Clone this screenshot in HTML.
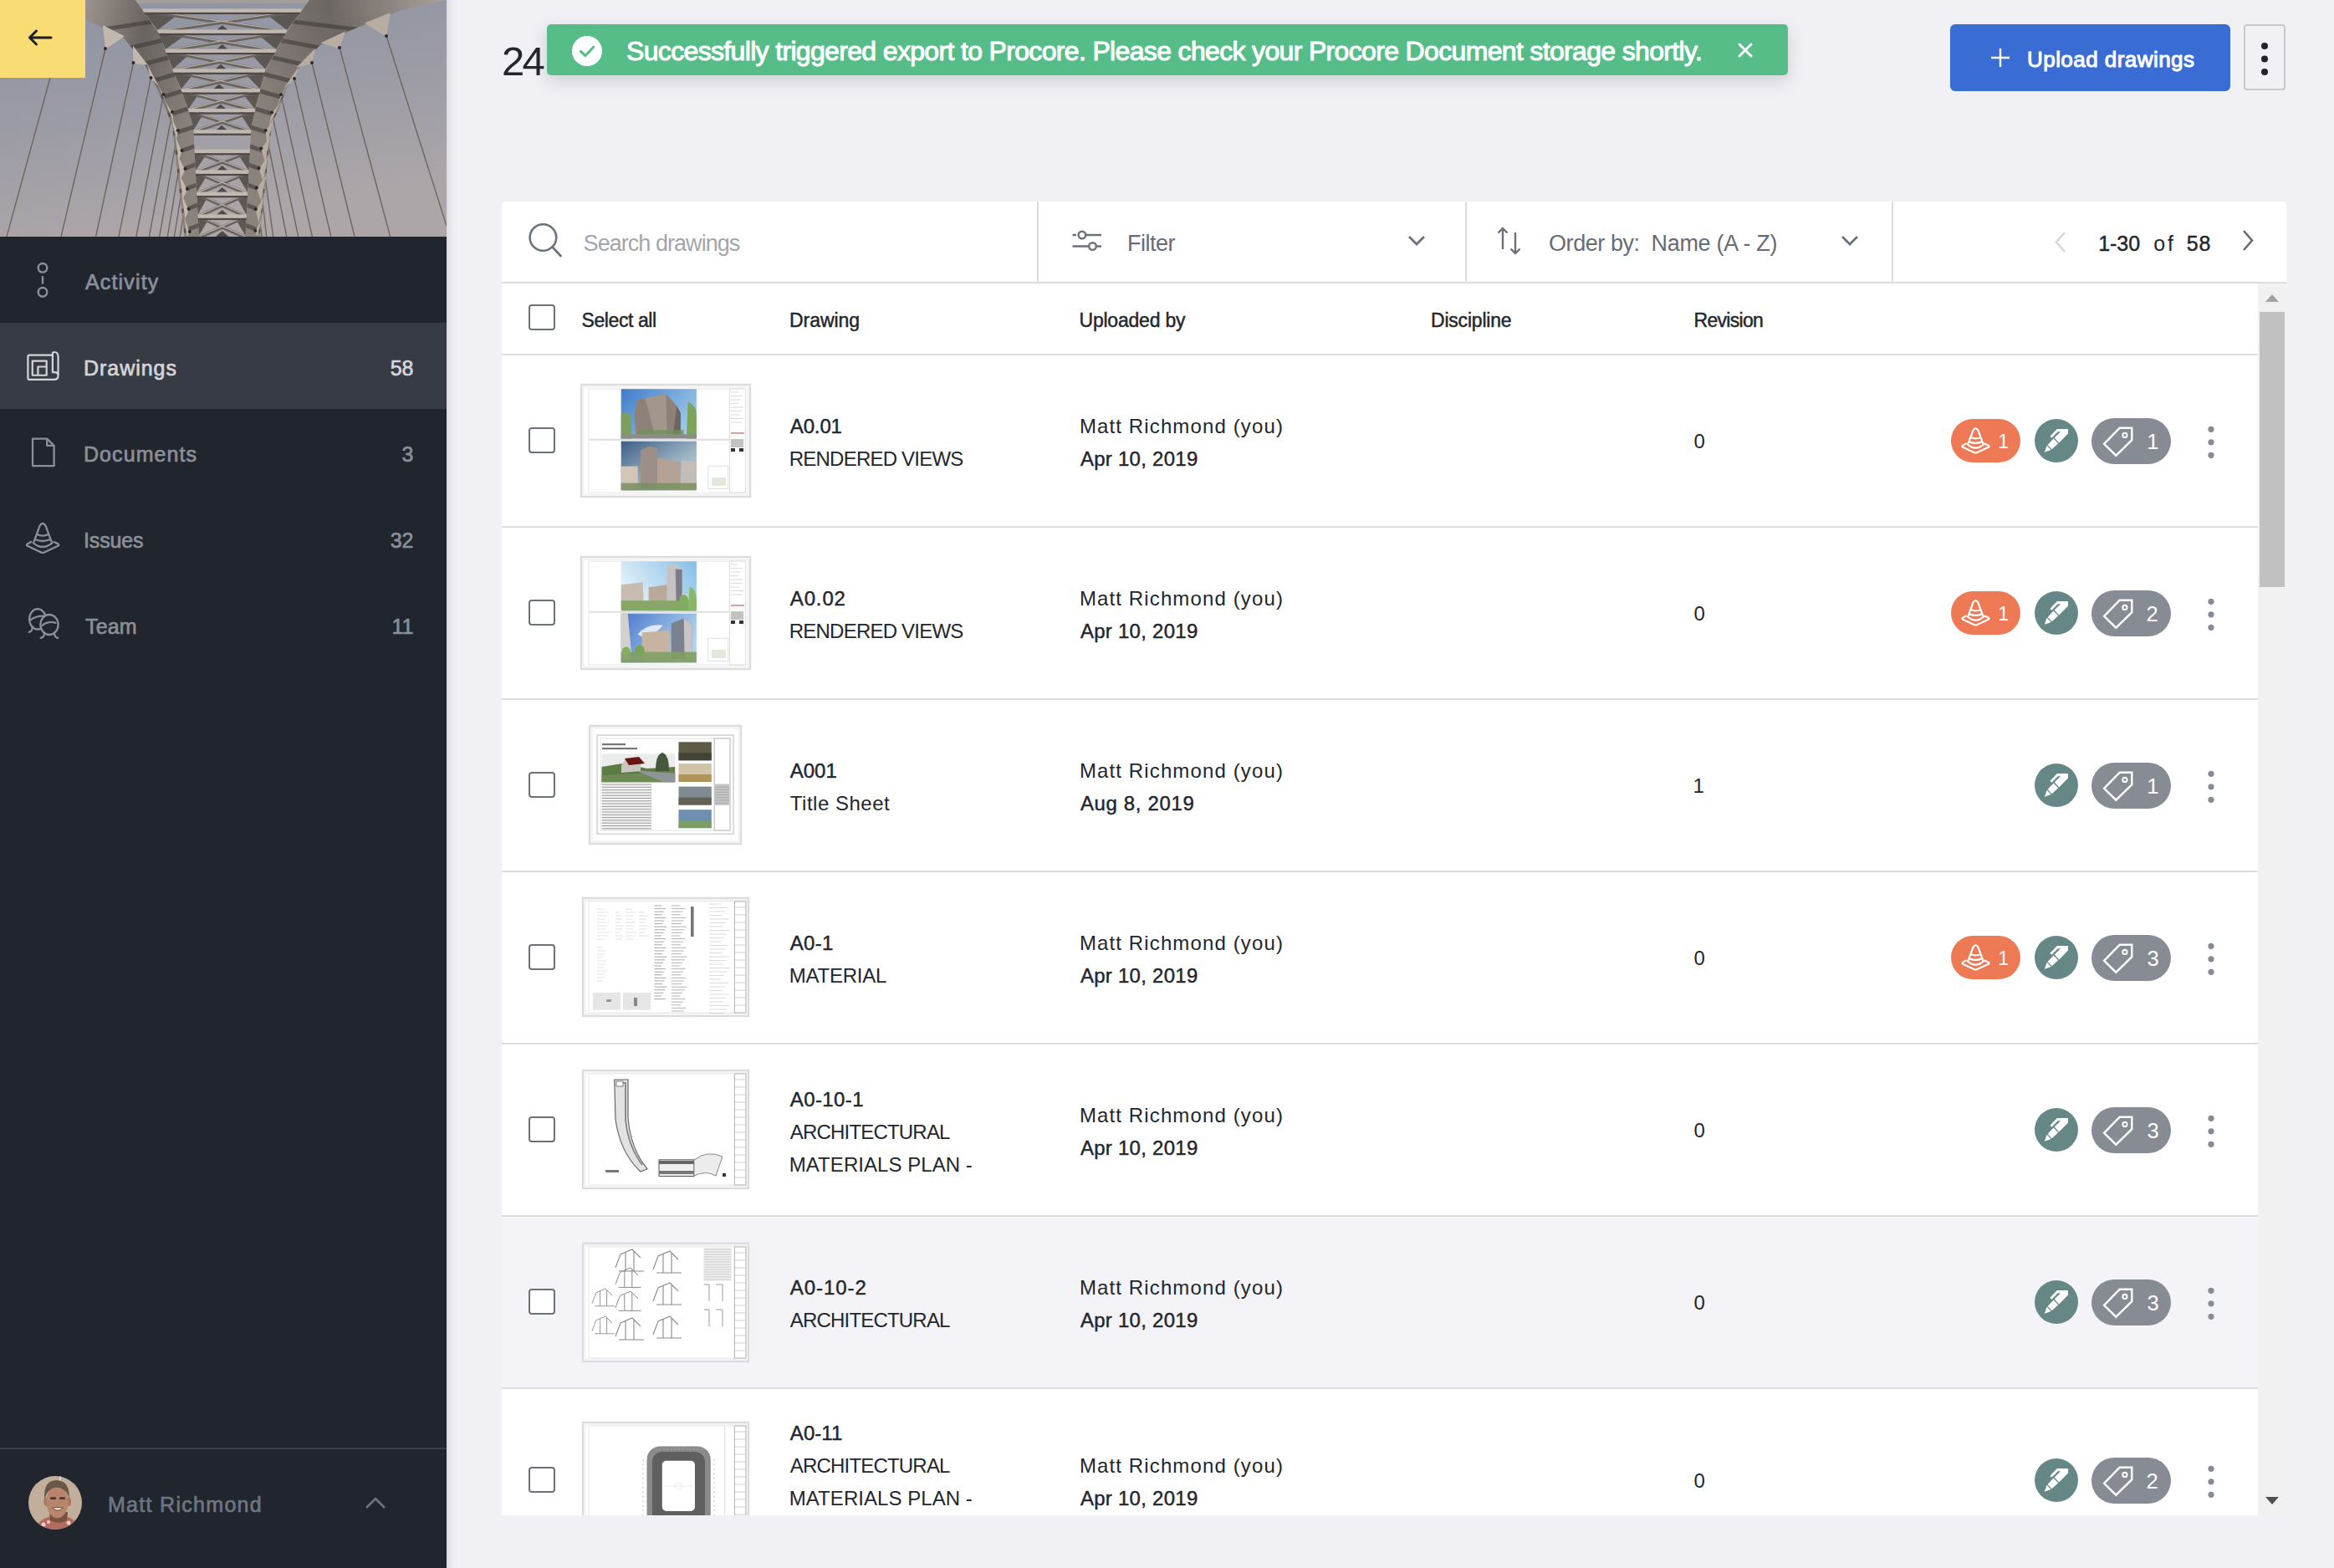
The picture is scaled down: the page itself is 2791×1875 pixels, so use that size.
<!DOCTYPE html>
<html><head><meta charset="utf-8"><style>
html,body{margin:0;padding:0;}
body{width:2791px;height:1875px;overflow:hidden;position:relative;background:#f0f0f5;font-family:"Liberation Sans", sans-serif;}
.t{position:absolute;white-space:nowrap;font-family:"Liberation Sans", sans-serif;}
.a{position:absolute;}
svg{position:absolute;display:block;overflow:visible}
</style></head><body>
<div class="a" style="left:0px;top:0px;width:534px;height:1875px;background:#21252e"></div>
<svg style="left:0px;top:0px;overflow:hidden" width="534" height="283" viewBox="0 0 534 283"><defs><linearGradient id="sky" x1="0" y1="0" x2="0.3" y2="1"><stop offset="0" stop-color="#8d93a3"/><stop offset="0.5" stop-color="#9b9ba5"/><stop offset="1" stop-color="#ada6a9"/></linearGradient><linearGradient id="tubeL" x1="0" y1="0" x2="1" y2="0.3"><stop offset="0" stop-color="#a39a93"/><stop offset="0.55" stop-color="#6a6461"/><stop offset="1" stop-color="#8a827c"/></linearGradient><linearGradient id="tubeR" x1="1" y1="0" x2="0" y2="0.3"><stop offset="0" stop-color="#aaa199"/><stop offset="0.55" stop-color="#6d6764"/><stop offset="1" stop-color="#8a827c"/></linearGradient></defs><rect width="534" height="283" fill="url(#sky)"/><line x1="60" y1="93" x2="8" y2="283" stroke="#6e655f" stroke-width="1.4"/><line x1="126" y1="58" x2="73" y2="283" stroke="#6e655f" stroke-width="1.4"/><line x1="159.5" y1="75" x2="114.6" y2="283" stroke="#6e655f" stroke-width="1.4"/><line x1="180.5" y1="93" x2="142" y2="283" stroke="#6e655f" stroke-width="1.4"/><line x1="195.5" y1="113" x2="162.9" y2="283" stroke="#6e655f" stroke-width="1.4"/><line x1="206" y1="134" x2="178.4" y2="283" stroke="#6e655f" stroke-width="1.4"/><line x1="212.7" y1="156" x2="190.7" y2="283" stroke="#6e655f" stroke-width="1.4"/><line x1="217.5" y1="180" x2="200.3" y2="283" stroke="#6e655f" stroke-width="1.4"/><line x1="221.5" y1="202" x2="208.4" y2="283" stroke="#6e655f" stroke-width="1.4"/><line x1="223.9" y1="226" x2="215.3" y2="283" stroke="#6e655f" stroke-width="1.4"/><line x1="462" y1="43" x2="534" y2="270" stroke="#6e655f" stroke-width="1.4"/><line x1="406" y1="57" x2="466.7" y2="283" stroke="#6e655f" stroke-width="1.4"/><line x1="373" y1="75" x2="424" y2="283" stroke="#6e655f" stroke-width="1.4"/><line x1="352" y1="94" x2="395.8" y2="283" stroke="#6e655f" stroke-width="1.4"/><line x1="336" y1="113" x2="373.3" y2="283" stroke="#6e655f" stroke-width="1.4"/><line x1="325" y1="134.5" x2="356.7" y2="283" stroke="#6e655f" stroke-width="1.4"/><line x1="317.6" y1="156" x2="342.8" y2="283" stroke="#6e655f" stroke-width="1.4"/><line x1="312.3" y1="177.5" x2="326.7" y2="283" stroke="#6e655f" stroke-width="1.4"/><line x1="309.6" y1="201" x2="318.7" y2="283" stroke="#6e655f" stroke-width="1.4"/><line x1="306.9" y1="224.6" x2="313" y2="283" stroke="#6e655f" stroke-width="1.4"/><path d="M170.8,12.9 L218.3,12.9 L188.5,35.9 Z M360.8,12.9 L313.3,12.9 L343.1,35.9 Z" fill="#5d5754"/><path d="M170.8,12.9 L343.1,37.9 M360.8,12.9 L188.5,37.9" stroke="#6a6460" stroke-width="4.2" fill="none"/><path d="M170.8,11.700000000000001 L343.1,36.699999999999996 M360.8,11.700000000000001 L188.5,36.699999999999996" stroke="#b4aca5" stroke-width="1.3" fill="none"/><path d="M256.8,37.9 L274.8,37.9 L265.8,29.9 Z" fill="#4f4a48"/><path d="M188.5,37.9 L227.2,37.9 L197.8,59 Z M343.1,37.9 L304.4,37.9 L330.1,59 Z" fill="#5d5754"/><path d="M188.5,37.9 L330.1,61 M343.1,37.9 L197.8,61" stroke="#6a6460" stroke-width="4.2" fill="none"/><path d="M188.5,36.699999999999996 L330.1,59.8 M343.1,36.699999999999996 L197.8,59.8" stroke="#b4aca5" stroke-width="1.3" fill="none"/><path d="M256.8,61 L274.8,61 L265.8,53 Z" fill="#4f4a48"/><path d="M197.8,61 L230.9,61 L206.6,82.8 Z M330.1,61 L297.0,61 L317.1,82.8 Z" fill="#5d5754"/><path d="M197.8,61 L317.1,84.8 M330.1,61 L206.6,84.8" stroke="#6a6460" stroke-width="4.2" fill="none"/><path d="M197.8,59.8 L317.1,83.6 M330.1,59.8 L206.6,83.6" stroke="#b4aca5" stroke-width="1.3" fill="none"/><path d="M255.0,84.8 L273.0,84.8 L264.0,76.8 Z" fill="#4f4a48"/><path d="M206.6,84.8 L234.2,84.8 L216.8,106.6 Z M317.1,84.8 L289.5,84.8 L311.0,106.6 Z" fill="#5d5754"/><path d="M206.6,84.8 L311.0,108.6 M317.1,84.8 L216.8,108.6" stroke="#6a6460" stroke-width="4.2" fill="none"/><path d="M206.6,83.6 L311.0,107.39999999999999 M317.1,83.6 L216.8,107.39999999999999" stroke="#b4aca5" stroke-width="1.3" fill="none"/><path d="M252.9,108.6 L270.9,108.6 L261.9,100.6 Z" fill="#4f4a48"/><path d="M216.8,108.6 L240.3,108.6 L225.2,130.4 Z M311.0,108.6 L287.4,108.6 L305.0,130.4 Z" fill="#5d5754"/><path d="M216.8,108.6 L305.0,132.4 M311.0,108.6 L225.2,132.4" stroke="#6a6460" stroke-width="4.2" fill="none"/><path d="M216.8,107.39999999999999 L305.0,131.20000000000002 M311.0,107.39999999999999 L225.2,131.20000000000002" stroke="#b4aca5" stroke-width="1.3" fill="none"/><path d="M254.9,132.4 L272.9,132.4 L263.9,124.4 Z" fill="#4f4a48"/><path d="M225.2,132.4 L245.2,132.4 L231.4,155.7 Z M305.0,132.4 L285.0,132.4 L300.1,155.7 Z" fill="#5d5754"/><path d="M225.2,132.4 L300.1,157.7 M305.0,132.4 L231.4,157.7" stroke="#6a6460" stroke-width="4.2" fill="none"/><path d="M225.2,131.20000000000002 L300.1,156.5 M305.0,131.20000000000002 L231.4,156.5" stroke="#b4aca5" stroke-width="1.3" fill="none"/><path d="M256.1,157.7 L274.1,157.7 L265.1,149.7 Z" fill="#4f4a48"/><path d="M232.6,181.2 L249.2,181.2 L233.8,203.9 Z M298.9,181.2 L282.3,181.2 L297.6,203.9 Z" fill="#5d5754"/><path d="M232.6,181.2 L297.6,205.9 M298.9,181.2 L233.8,205.9" stroke="#6a6460" stroke-width="4.2" fill="none"/><path d="M232.6,180.0 L297.6,204.70000000000002 M298.9,180.0 L233.8,204.70000000000002" stroke="#b4aca5" stroke-width="1.3" fill="none"/><path d="M256.7,205.9 L274.7,205.9 L265.7,197.9 Z" fill="#4f4a48"/><path d="M233.8,205.9 L249.8,205.9 L235.2,230.1 Z M297.6,205.9 L281.6,205.9 L296.2,230.1 Z" fill="#5d5754"/><path d="M233.8,205.9 L296.2,232.1 M297.6,205.9 L235.2,232.1" stroke="#6a6460" stroke-width="4.2" fill="none"/><path d="M233.8,204.70000000000002 L296.2,230.9 M297.6,204.70000000000002 L235.2,230.9" stroke="#b4aca5" stroke-width="1.3" fill="none"/><path d="M256.7,232.1 L274.7,232.1 L265.7,224.1 Z" fill="#4f4a48"/><path d="M235.2,232.1 L250.4,232.1 L236.5,256.9 Z M296.2,232.1 L280.9,232.1 L294.8,256.9 Z" fill="#5d5754"/><path d="M235.2,232.1 L294.8,258.9 M296.2,232.1 L236.5,258.9" stroke="#6a6460" stroke-width="4.2" fill="none"/><path d="M235.2,230.9 L294.8,257.7 M296.2,230.9 L236.5,257.7" stroke="#b4aca5" stroke-width="1.3" fill="none"/><path d="M256.7,258.9 L274.7,258.9 L265.7,250.89999999999998 Z" fill="#4f4a48"/><path d="M236.5,258.9 L251.1,258.9 L237.8,282 Z M294.8,258.9 L280.2,258.9 L293.5,282 Z" fill="#5d5754"/><path d="M236.5,258.9 L293.5,284 M294.8,258.9 L237.8,284" stroke="#6a6460" stroke-width="4.2" fill="none"/><path d="M236.5,257.7 L293.5,282.8 M294.8,257.7 L237.8,282.8" stroke="#b4aca5" stroke-width="1.3" fill="none"/><path d="M256.7,284 L274.7,284 L265.7,276 Z" fill="#4f4a48"/><rect x="170.8" y="10.4" width="190.0" height="4.5" fill="#c0b8b1"/><rect x="170.8" y="14.9" width="190.0" height="2.2" fill="#4e4846"/><rect x="188.5" y="35.4" width="154.6" height="4.5" fill="#c0b8b1"/><rect x="188.5" y="39.9" width="154.6" height="2.2" fill="#4e4846"/><rect x="197.8" y="58.5" width="132.3" height="4.5" fill="#c0b8b1"/><rect x="197.8" y="63.0" width="132.3" height="2.2" fill="#4e4846"/><rect x="206.6" y="82.3" width="110.5" height="4.5" fill="#c0b8b1"/><rect x="206.6" y="86.8" width="110.5" height="2.2" fill="#4e4846"/><rect x="216.8" y="106.1" width="94.2" height="4.5" fill="#c0b8b1"/><rect x="216.8" y="110.6" width="94.2" height="2.2" fill="#4e4846"/><rect x="225.2" y="129.9" width="79.8" height="4.5" fill="#c0b8b1"/><rect x="225.2" y="134.4" width="79.8" height="2.2" fill="#4e4846"/><rect x="231.4" y="155.2" width="68.7" height="4.5" fill="#c0b8b1"/><rect x="231.4" y="159.7" width="68.7" height="2.2" fill="#4e4846"/><rect x="232.6" y="178.7" width="66.3" height="4.5" fill="#c0b8b1"/><rect x="232.6" y="183.2" width="66.3" height="2.2" fill="#4e4846"/><rect x="233.8" y="203.4" width="63.7" height="4.5" fill="#c0b8b1"/><rect x="233.8" y="207.9" width="63.7" height="2.2" fill="#4e4846"/><rect x="235.2" y="229.6" width="61.0" height="4.5" fill="#c0b8b1"/><rect x="235.2" y="234.1" width="61.0" height="2.2" fill="#4e4846"/><rect x="236.5" y="256.4" width="58.3" height="4.5" fill="#c0b8b1"/><rect x="236.5" y="260.9" width="58.3" height="2.2" fill="#4e4846"/><path d="M150,0 L380,0 L372,4 L158,4 Z" fill="#a59d97"/><path d="M90,0 L161.7,0 L190,40 L206.7,85 L219.5,115 L231,150 L237.8,284 L220.7,284 L206,150 L190,110 L172,75 L147.6,45 L100,22 L90,20 Z" fill="url(#tubeL)"/><path d="M370,0 L534,0 L480,12 L420,36 L382.8,54 L361,75.8 L344,102.8 L334,128.5 L324.6,150 L310.7,284 L293.5,284 L300.5,150 L317,85 L341.6,40 Z" fill="url(#tubeR)"/><defs><clipPath id="cL"><path d="M90,0 L161.7,0 L190,40 L206.7,85 L219.5,115 L231,150 L237.8,284 L220.7,284 L206,150 L190,110 L172,75 L147.6,45 L100,22 L90,20 Z"/></clipPath><clipPath id="cR"><path d="M370,0 L534,0 L480,12 L420,36 L382.8,54 L361,75.8 L344,102.8 L334,128.5 L324.6,150 L310.7,284 L293.5,284 L300.5,150 L317,85 L341.6,40 Z"/></clipPath></defs><g clip-path="url(#cL)"><line x1="110.6" y1="37" x2="188.9" y2="25" stroke="#3f3b3a" stroke-width="5" opacity="0.6"/><line x1="147.3" y1="59" x2="200.5" y2="47" stroke="#3f3b3a" stroke-width="5" opacity="0.6"/><line x1="163.6" y1="79" x2="207.9" y2="67" stroke="#3f3b3a" stroke-width="5" opacity="0.6"/><line x1="174.7" y1="99" x2="215.7" y2="87" stroke="#3f3b3a" stroke-width="5" opacity="0.6"/><line x1="184.8" y1="119" x2="224.2" y2="107" stroke="#3f3b3a" stroke-width="5" opacity="0.6"/><line x1="193.2" y1="140" x2="231.4" y2="128" stroke="#3f3b3a" stroke-width="5" opacity="0.6"/><line x1="200.5" y1="162" x2="237.3" y2="150" stroke="#3f3b3a" stroke-width="5" opacity="0.6"/><line x1="203.1" y1="185" x2="238.4" y2="173" stroke="#3f3b3a" stroke-width="5" opacity="0.6"/><line x1="205.5" y1="207" x2="239.5" y2="195" stroke="#3f3b3a" stroke-width="5" opacity="0.6"/><line x1="208.1" y1="231" x2="240.8" y2="219" stroke="#3f3b3a" stroke-width="5" opacity="0.6"/><line x1="210.8" y1="255" x2="242.0" y2="243" stroke="#3f3b3a" stroke-width="5" opacity="0.6"/><line x1="213.4" y1="279" x2="243.2" y2="267" stroke="#3f3b3a" stroke-width="5" opacity="0.6"/></g><g clip-path="url(#cR)"><line x1="441.0" y1="37" x2="342.7" y2="25" stroke="#3f3b3a" stroke-width="5" opacity="0.6"/><line x1="392.9" y1="59" x2="329.0" y2="47" stroke="#3f3b3a" stroke-width="5" opacity="0.6"/><line x1="370.8" y1="79" x2="318.1" y2="67" stroke="#3f3b3a" stroke-width="5" opacity="0.6"/><line x1="356.8" y1="99" x2="309.2" y2="87" stroke="#3f3b3a" stroke-width="5" opacity="0.6"/><line x1="346.4" y1="119" x2="304.1" y2="107" stroke="#3f3b3a" stroke-width="5" opacity="0.6"/><line x1="338.0" y1="140" x2="298.8" y2="128" stroke="#3f3b3a" stroke-width="5" opacity="0.6"/><line x1="330.1" y1="162" x2="294.2" y2="150" stroke="#3f3b3a" stroke-width="5" opacity="0.6"/><line x1="327.7" y1="185" x2="293.0" y2="173" stroke="#3f3b3a" stroke-width="5" opacity="0.6"/><line x1="325.4" y1="207" x2="291.9" y2="195" stroke="#3f3b3a" stroke-width="5" opacity="0.6"/><line x1="322.9" y1="231" x2="290.6" y2="219" stroke="#3f3b3a" stroke-width="5" opacity="0.6"/><line x1="320.4" y1="255" x2="289.4" y2="243" stroke="#3f3b3a" stroke-width="5" opacity="0.6"/><line x1="317.9" y1="279" x2="288.1" y2="267" stroke="#3f3b3a" stroke-width="5" opacity="0.6"/></g><path d="M122.8,30.0 L149.0,43.2 L126,59 Z" fill="#c3b8ad"/><circle cx="126" cy="58" r="2" fill="#2a2a2e"/><path d="M158.9,54.5 L176.9,77.7 L159.5,76 Z" fill="#c3b8ad"/><circle cx="159.5" cy="75" r="2" fill="#2a2a2e"/><path d="M175.8,76.5 L189.6,102.4 L180.5,94 Z" fill="#c3b8ad"/><circle cx="180.5" cy="93" r="2" fill="#2a2a2e"/><path d="M186.9,98.1 L199.2,124.6 L195.5,114 Z" fill="#c3b8ad"/><circle cx="195.5" cy="113" r="2" fill="#2a2a2e"/><path d="M196.5,119.4 L207.9,146.3 L206,135 Z" fill="#c3b8ad"/><circle cx="206" cy="134" r="2" fill="#2a2a2e"/><path d="M204.5,139.4 L211.0,167.6 L212.7,157 Z" fill="#c3b8ad"/><circle cx="212.7" cy="156" r="2" fill="#2a2a2e"/><path d="M209.6,163.0 L213.7,191.8 L217.5,181 Z" fill="#c3b8ad"/><circle cx="217.5" cy="180" r="2" fill="#2a2a2e"/><path d="M212.1,185.2 L216.1,214.0 L221.5,203 Z" fill="#c3b8ad"/><circle cx="221.5" cy="202" r="2" fill="#2a2a2e"/><path d="M214.7,209.1 L218.8,238.0 L223.9,227 Z" fill="#c3b8ad"/><circle cx="223.9" cy="226" r="2" fill="#2a2a2e"/><path d="M217.3,233.0 L221.4,261.9 L225.6,251 Z" fill="#c3b8ad"/><circle cx="225.6" cy="250" r="2" fill="#2a2a2e"/><path d="M220.3,259.8 L223.7,283.0 L226.7,278 Z" fill="#c3b8ad"/><circle cx="226.7" cy="277" r="2" fill="#2a2a2e"/><path d="M466.8,15.3 L435.9,27.4 L462,44 Z" fill="#b8ada3"/><circle cx="462" cy="43" r="2" fill="#2a2a2e"/><path d="M413.0,37.4 L383.0,51.4 L406,58 Z" fill="#b8ada3"/><circle cx="406" cy="57" r="2" fill="#2a2a2e"/><path d="M377.3,57.5 L354.3,80.7 L373,76 Z" fill="#b8ada3"/><circle cx="373" cy="75" r="2" fill="#2a2a2e"/><path d="M357.7,79.0 L339.4,105.8 L352,95 Z" fill="#b8ada3"/><circle cx="352" cy="94" r="2" fill="#2a2a2e"/><path d="M344.8,99.5 L330.7,128.3 L336,114 Z" fill="#b8ada3"/><circle cx="336" cy="113" r="2" fill="#2a2a2e"/><path d="M335.8,121.9 L321.4,150.6 L325,135.5 Z" fill="#b8ada3"/><circle cx="325" cy="134.5" r="2" fill="#2a2a2e"/><path d="M327.5,141.3 L319.3,171.6 L317.6,157 Z" fill="#b8ada3"/><circle cx="317.6" cy="156" r="2" fill="#2a2a2e"/><path d="M323.1,162.5 L317.0,193.4 L312.3,178.5 Z" fill="#b8ada3"/><circle cx="312.3" cy="177.5" r="2" fill="#2a2a2e"/><path d="M320.7,186.1 L314.6,216.9 L309.6,202 Z" fill="#b8ada3"/><circle cx="309.6" cy="201" r="2" fill="#2a2a2e"/><path d="M318.2,209.7 L312.1,240.5 L306.9,225.6 Z" fill="#b8ada3"/><circle cx="306.9" cy="224.6" r="2" fill="#2a2a2e"/><path d="M315.6,235.2 L309.5,266.1 L305.8,251.3 Z" fill="#b8ada3"/><circle cx="305.8" cy="250.3" r="2" fill="#2a2a2e"/><path d="M312.9,260.7 L307.7,283.0 L305.3,277 Z" fill="#b8ada3"/><circle cx="305.3" cy="276" r="2" fill="#2a2a2e"/></svg>
<div class="a" style="left:0px;top:0px;width:102px;height:93px;background:#f9dd74"></div>
<svg style="left:30px;top:32px;" width="36" height="26" viewBox="0 0 36 26"><path d="M6,13 L31,13" stroke="#1c1f26" stroke-width="3" stroke-linecap="round"/><path d="M13.5,5 L5.5,13 L13.5,21" fill="none" stroke="#1c1f26" stroke-width="3" stroke-linecap="round" stroke-linejoin="round"/></svg>
<div class="a" style="left:0px;top:386px;width:534px;height:103px;background:#363b45"></div>
<svg style="left:0px;top:0px;" width="100" height="800" viewBox="0 0 100 800"><g fill="none" stroke="#8a8f98" stroke-width="2.4" stroke-linecap="round"><circle cx="51" cy="320.3" r="5.3"/><circle cx="51" cy="349.3" r="5.3"/><line x1="51" y1="331" x2="51" y2="338.6"/></g><g fill="none" stroke="#d4d5d9" stroke-width="2.2" stroke-linejoin="round"><path d="M62.9,424.6 L35.4,424.6 Q33.4,424.6 33.4,426.6 L33.4,451.9 Q33.4,453.9 35.4,453.9 L64.6,453.9 Q69.6,453.9 69.6,449 L69.6,427 Q69.6,421 65,421 L64.9,421 Q62.9,421 62.9,423 L62.9,445.2 L65,445.2 Q69.6,445.2 69.6,449.5"/><path d="M38.75,431.6 L55.7,431.6 L55.7,448.75 L38.75,448.75 Z"/><path d="M45.4,448.75 L45.4,438.5 L55.7,438.5"/></g><g fill="none" stroke="#8a8f98" stroke-width="2.3" stroke-linejoin="round"><path d="M39,524.7 L56.2,524.7 L64.6,532.8 L64.6,557.1 L39,557.1 Z"/><path d="M56.2,524.7 L56.2,532.8 L64.6,532.8"/></g><g transform="translate(51,625.6) scale(1.0)" fill="none" stroke="#8a8f98" stroke-width="2.30" stroke-linejoin="round" stroke-linecap="round"><path d="M-11.1,23.7 L-3.5,3.2 Q0,-2.4 3.6,3.2 L11.2,23.7 M-11.1,23.7 Q0,33.1 11.2,23.7 M-6.7,13.4 Q0,16.6 7,13.4 M-8.7,19.7 Q0,23.1 8.5,19.7 M-13.8,22.4 L-18.2,24.8 Q-20,26.1 -18.2,27.2 L-1.6,35 Q0,35.7 1.6,35 L18.4,27.2 Q20.2,26.1 18.4,24.8 L13.4,22.4"/></g><g fill="none" stroke="#8a8f98" stroke-width="2.3" stroke-linecap="round"><ellipse cx="45" cy="740.3" rx="9.9" ry="12.2"/><path d="M37.1,741 Q44,736 52.7,736.7"/><path d="M38.9,749.5 Q38.5,755 34.8,755.9"/><ellipse cx="59" cy="747" rx="10.6" ry="12" fill="#21252e"/><path d="M50.6,747.9 Q58,742 66.4,744.9"/><path d="M53.2,756.5 Q53,762 48.8,762.8"/><path d="M64.9,756.5 Q65,762 69.2,762.8"/></g></svg>
<div class="a" style="left:0px;top:1731px;width:534px;height:2px;background:#3a3f48"></div>
<svg style="left:34px;top:1765px;" width="64" height="64" viewBox="0 0 64 64"><defs><clipPath id="av"><circle cx="32" cy="32" r="32"/></clipPath></defs><g clip-path="url(#av)"><rect width="64" height="64" fill="#c1af9c"/><rect x="37" y="0" width="2" height="9" fill="#ddd3c8"/><path d="M8,64 Q12,52 25,48.5 L46,48.5 Q58,52 60,64 Z" fill="#b26b5f"/><circle cx="18" cy="58" r="2.5" fill="#e6cfc6"/><circle cx="24" cy="55" r="2" fill="#e6cfc6"/><circle cx="48" cy="56" r="2.5" fill="#e6cfc6"/><circle cx="52" cy="61" r="2" fill="#e6cfc6"/><path d="M25,43 L47,43 L46,53 Q36,59 26,53 Z" fill="#7a5243"/><ellipse cx="21" cy="31" rx="2.6" ry="5" fill="#a97760"/><ellipse cx="48.5" cy="31" rx="2.6" ry="5" fill="#a97760"/><ellipse cx="34.5" cy="31" rx="13" ry="19.5" fill="#b8846c"/><path d="M19.4,29 Q17,5 33.6,5 Q50,5 48.8,29 Q47,15 34,13.5 Q22,14.5 19.4,29 Z" fill="#6b5747"/><rect x="26" y="25.3" width="7" height="2.6" rx="1" fill="#4d372c"/><rect x="37" y="25.3" width="7" height="2.6" rx="1" fill="#4d372c"/><path d="M28.5,38 Q35,37 41.5,38 Q35,44.5 28.5,38 Z" fill="#e9dcc4" stroke="#5a3a30" stroke-width="0.8"/></g></svg>
<svg style="left:435px;top:1787px;" width="30" height="20" viewBox="0 0 30 20"><path d="M3,16 L14,5 L25,16" fill="none" stroke="#6f7580" stroke-width="2.6"/></svg>
<div class="a" style="left:534px;top:0px;width:12px;height:1875px;background:linear-gradient(to right,rgba(20,20,40,0.10),rgba(20,20,40,0.03) 50%,rgba(0,0,0,0))"></div>
<div class="a" style="left:654px;top:29px;width:1484px;height:61px;background:#56bd88;border-radius:5px;box-shadow:0 7px 20px rgba(40,40,60,0.17)"></div>
<svg style="left:684px;top:43px;" width="36" height="36" viewBox="0 0 36 36"><circle cx="18" cy="18" r="18" fill="#fff"/><path d="M10.5,18.5 L16,23.5 L25.5,13.5" fill="none" stroke="#56bd88" stroke-width="3.2" stroke-linecap="round" stroke-linejoin="round"/></svg>
<svg style="left:2075.5px;top:48.5px;" width="22" height="22" viewBox="0 0 22 22"><path d="M4,4 L18,18 M18,4 L4,18" stroke="#fff" stroke-width="3" stroke-linecap="round"/></svg>
<div class="a" style="left:2332px;top:29px;width:335px;height:80px;background:#3a6dd4;border-radius:6px"></div>
<svg style="left:2380px;top:57px;" width="24" height="24" viewBox="0 0 24 24"><path d="M12,1 L12,23 M1,12 L23,12" stroke="#fff" stroke-width="2.4"/></svg>
<div class="a" style="left:2683px;top:29px;width:50px;height:79px;box-sizing:border-box;border:2px solid #c9c9cd;border-radius:4px"></div>
<svg style="left:2698px;top:45px;" width="20" height="50" viewBox="0 0 20 50"><circle cx="10" cy="10" r="4" fill="#1f232b"/><circle cx="10" cy="25.5" r="4" fill="#1f232b"/><circle cx="10" cy="41" r="4" fill="#1f232b"/></svg>
<div class="a" style="left:600px;top:241px;width:2134px;height:1571px;background:#fff;border-radius:4px 4px 0 0"></div>
<div class="a" style="left:600px;top:337px;width:2134px;height:2px;background:#dcdce0"></div>
<div class="a" style="left:1240px;top:241px;width:2px;height:96px;background:#dcdce0"></div>
<div class="a" style="left:1752px;top:241px;width:2px;height:96px;background:#dcdce0"></div>
<div class="a" style="left:2262px;top:241px;width:2px;height:96px;background:#dcdce0"></div>
<svg style="left:630px;top:265px;" width="46" height="46" viewBox="0 0 46 46"><circle cx="19.4" cy="19" r="15.8" fill="none" stroke="#6b717b" stroke-width="2.6"/><path d="M30.6,30.4 L40.5,41" stroke="#6b717b" stroke-width="2.8" stroke-linecap="round"/></svg>
<svg style="left:1280px;top:272px;" width="40" height="32" viewBox="0 0 40 32"><g fill="none" stroke="#6b717b" stroke-width="2.4"><path d="M2.5,9 L7,9 M18.5,9 L37,9 M2.5,22.5 L22,22.5 M31,22.5 L37,22.5"/><circle cx="13.9" cy="9" r="4.3"/><circle cx="26.5" cy="22.5" r="4.3"/></g></svg>
<svg style="left:1682px;top:280px;" width="24" height="16" viewBox="0 0 24 16"><path d="M3,3 L12,12 L21,3" fill="none" stroke="#6b717b" stroke-width="2.8"/></svg>
<svg style="left:1788px;top:268px;" width="34" height="40" viewBox="0 0 34 40"><g fill="none" stroke="#6b717b" stroke-width="2.4"><path d="M9,5 L9,30 M3.5,10.5 L9,5 L14.5,10.5"/><path d="M24,10 L24,35 M18.5,29.5 L24,35 L29.5,29.5"/></g></svg>
<svg style="left:2200px;top:280px;" width="24" height="16" viewBox="0 0 24 16"><path d="M3,3 L12,12 L21,3" fill="none" stroke="#6b717b" stroke-width="2.8"/></svg>
<svg style="left:2452px;top:274px;" width="24" height="32" viewBox="0 0 24 32"><path d="M17,4 L7,15.5 L17,27" fill="none" stroke="#d5d6d9" stroke-width="2.6"/></svg>
<svg style="left:2676px;top:272px;" width="24" height="32" viewBox="0 0 24 32"><path d="M7,4 L17,15.5 L7,27" fill="none" stroke="#636975" stroke-width="2.6"/></svg>
<div class="a" style="left:632px;top:364px;width:32px;height:31px;box-sizing:border-box;border:2px solid #6b717b;border-radius:4px;background:#fff"></div>
<div class="a" style="left:600px;top:423px;width:2100px;height:2px;background:#dcdce0"></div>
<div class="a" style="left:600px;top:1455px;width:2100px;height:204px;background:#f4f4f8"></div>
<div class="a" style="left:600px;top:629px;width:2100px;height:2px;background:#dcdce0"></div>
<div class="a" style="left:600px;top:835px;width:2100px;height:2px;background:#dcdce0"></div>
<div class="a" style="left:600px;top:1041px;width:2100px;height:2px;background:#dcdce0"></div>
<div class="a" style="left:600px;top:1247px;width:2100px;height:2px;background:#dcdce0"></div>
<div class="a" style="left:600px;top:1453px;width:2100px;height:2px;background:#dcdce0"></div>
<div class="a" style="left:600px;top:1659px;width:2100px;height:2px;background:#dcdce0"></div>
<div class="a" style="left:632px;top:511px;width:32px;height:31px;box-sizing:border-box;border:2px solid #6b717b;border-radius:4px;background:#fff"></div>
<svg style="left:694px;top:459px;" width="204" height="136" viewBox="0 0 204 136"><rect x="1" y="1" width="202" height="134" fill="#fff" stroke="#dcdce0" stroke-width="2.4"/><rect x="3.5" y="3.5" width="197" height="129" fill="none" stroke="#f1f1f2" stroke-width="2"/><rect x="10" y="6" width="186" height="124" fill="none" stroke="#e6e6e6" stroke-width="1"/><line x1="10" y1="66.8" x2="179" y2="66.8" stroke="#dedede" stroke-width="2"/><rect x="178.7" y="6" width="19" height="124" fill="#fff" stroke="#d0d0d0" stroke-width="0.8"/><line x1="180" y1="10.0" x2="188.8" y2="10.0" stroke="#c9c9c9" stroke-width="0.7"/><line x1="180" y1="14.5" x2="193.8" y2="14.5" stroke="#c9c9c9" stroke-width="0.7"/><line x1="180" y1="19.0" x2="191.7" y2="19.0" stroke="#c9c9c9" stroke-width="0.7"/><line x1="180" y1="23.5" x2="189.5" y2="23.5" stroke="#c9c9c9" stroke-width="0.7"/><line x1="180" y1="28.0" x2="194.6" y2="28.0" stroke="#c9c9c9" stroke-width="0.7"/><line x1="180" y1="32.5" x2="192.4" y2="32.5" stroke="#c9c9c9" stroke-width="0.7"/><line x1="180" y1="37.0" x2="190.2" y2="37.0" stroke="#c9c9c9" stroke-width="0.7"/><line x1="180" y1="41.5" x2="195.3" y2="41.5" stroke="#c9c9c9" stroke-width="0.7"/><line x1="180" y1="46.0" x2="193.1" y2="46.0" stroke="#c9c9c9" stroke-width="0.7"/><line x1="180" y1="58.9" x2="196" y2="58.9" stroke="#e05a5a" stroke-width="1.2"/><rect x="180" y="66" width="15" height="10" fill="#999" opacity="0.6"/><rect x="180" y="77" width="5" height="4" fill="#333"/><rect x="190" y="77" width="5" height="4" fill="#333"/><rect x="152.8" y="98.2" width="24" height="27.3" fill="none" stroke="#d5d5d5" stroke-width="0.8"/><rect x="157" y="112" width="17" height="10" fill="#dfeadb"/><defs><linearGradient id="sa0" x1="0" y1="0" x2="1" y2="0.6"><stop offset="0" stop-color="#3f7cc9"/><stop offset="1" stop-color="#9fcbea"/></linearGradient><linearGradient id="sb0" x1="0" y1="0" x2="1" y2="1"><stop offset="0" stop-color="#3d5f87"/><stop offset="0.6" stop-color="#9fb6c6"/><stop offset="1" stop-color="#d3d4cf"/></linearGradient></defs><g transform="translate(48.7,6.2)"><rect width="90.2" height="59.2" fill="url(#sa0)"/><path d="M19.1,13 L28.8,11.1 L53.7,5.6 L66.6,20.4 L71.2,28.7 L71.2,54.6 L17.6,54.6 L15.7,28.7 Z" fill="#8e8179"/><path d="M28.8,11.1 L53.7,5.6 L55,54.6 L40,54.6 Z" fill="#a3968c"/><path d="M66.6,20.4 L71.2,28.7 L71.2,54.6 L62,54.6 Z" fill="#6f6560"/><path d="M0,30 Q6,26 12,32 L12,59.2 L0,59.2 Z" fill="#7d9d5c"/><path d="M80,15 Q90,20 90.2,30 L90.2,59.2 L78,59.2 Z" fill="#7ea35b"/><rect x="0" y="54" width="90.2" height="5.2" fill="#8f8c86"/><rect x="20" y="49" width="55" height="5" fill="#71905a" opacity="0.8"/></g><g transform="translate(48.7,68.6)"><rect width="90.2" height="58.8" fill="url(#sb0)"/><path d="M23.1,10.6 L35,6 L43.5,8.8 L43.5,56.9 L23.1,56.9 Z" fill="#9b8f88"/><path d="M43.5,19.9 L71.2,24.5 L71.2,56.9 L43.5,56.9 Z" fill="#b3a294"/><path d="M72.1,22.7 L90.2,24.5 L90.2,56.9 L72.1,56.9 Z" fill="#c4bcb6"/><path d="M0,30 L20,30 L20,57 L0,57 Z" fill="#d3c6b8"/><rect x="0" y="50" width="90.2" height="8.8" fill="#7b8f60" opacity="0.85"/></g></svg>
<div class="a" style="left:2333px;top:501px;width:83px;height:52px;background:#ee7955;border-radius:26px"></div><svg style="left:2333px;top:501px;" width="83" height="52" viewBox="0 0 83 52"><g transform="translate(29.4,10.9) scale(0.837)" fill="none" stroke="#ffffff" stroke-width="2.63" stroke-linejoin="round" stroke-linecap="round"><path d="M-11.1,23.7 L-3.5,3.2 Q0,-2.4 3.6,3.2 L11.2,23.7 M-11.1,23.7 Q0,33.1 11.2,23.7 M-6.7,13.4 Q0,16.6 7,13.4 M-8.7,19.7 Q0,23.1 8.5,19.7 M-13.8,22.4 L-18.2,24.8 Q-20,26.1 -18.2,27.2 L-1.6,35 Q0,35.7 1.6,35 L18.4,27.2 Q20.2,26.1 18.4,24.8 L13.4,22.4"/></g></svg><svg style="left:2433px;top:501px;" width="52" height="52" viewBox="0 0 52 52"><circle cx="26" cy="26" r="26" fill="#658887"/><g fill="#fff"><path d="M26.9,11.9 L40,11.9 L40,17.6 L29.2,28.4 L23.7,22.6 L31,15.3 L27.7,15.3 L20.4,22.7 L18.4,20.7 Z"/><path d="M22.6,23.5 L28.2,29.2 L20.6,36.3 L15.6,31 Z"/><path d="M14.6,31.8 L19.6,37.1 L11.9,39.8 Z"/></g></svg><svg style="left:2501px;top:499.5px;" width="95" height="55" viewBox="0 0 95 55"><rect width="95" height="55" rx="27.5" fill="#868b94"/><path d="M33.7,11.7 L48.3,11.7 L48.3,26.2 L29.3,44.7 L15.1,30.8 Z" fill="none" stroke="#fff" stroke-width="2.4" stroke-linejoin="miter"/><circle cx="39.9" cy="20.4" r="2.6" fill="none" stroke="#fff" stroke-width="2"/></svg><svg style="left:2638px;top:506.5px;" width="12" height="44" viewBox="0 0 12 44"><circle cx="6" cy="6.3" r="3.6" fill="#868b94"/><circle cx="6" cy="21.8" r="3.6" fill="#868b94"/><circle cx="6" cy="37.3" r="3.6" fill="#868b94"/></svg>
<div class="a" style="left:632px;top:717px;width:32px;height:31px;box-sizing:border-box;border:2px solid #6b717b;border-radius:4px;background:#fff"></div>
<svg style="left:694px;top:665px;" width="204" height="136" viewBox="0 0 204 136"><rect x="1" y="1" width="202" height="134" fill="#fff" stroke="#dcdce0" stroke-width="2.4"/><rect x="3.5" y="3.5" width="197" height="129" fill="none" stroke="#f1f1f2" stroke-width="2"/><rect x="10" y="6" width="186" height="124" fill="none" stroke="#e6e6e6" stroke-width="1"/><line x1="10" y1="66.8" x2="179" y2="66.8" stroke="#dedede" stroke-width="2"/><rect x="178.7" y="6" width="19" height="124" fill="#fff" stroke="#d0d0d0" stroke-width="0.8"/><line x1="180" y1="10.0" x2="188.8" y2="10.0" stroke="#c9c9c9" stroke-width="0.7"/><line x1="180" y1="14.5" x2="193.8" y2="14.5" stroke="#c9c9c9" stroke-width="0.7"/><line x1="180" y1="19.0" x2="191.7" y2="19.0" stroke="#c9c9c9" stroke-width="0.7"/><line x1="180" y1="23.5" x2="189.5" y2="23.5" stroke="#c9c9c9" stroke-width="0.7"/><line x1="180" y1="28.0" x2="194.6" y2="28.0" stroke="#c9c9c9" stroke-width="0.7"/><line x1="180" y1="32.5" x2="192.4" y2="32.5" stroke="#c9c9c9" stroke-width="0.7"/><line x1="180" y1="37.0" x2="190.2" y2="37.0" stroke="#c9c9c9" stroke-width="0.7"/><line x1="180" y1="41.5" x2="195.3" y2="41.5" stroke="#c9c9c9" stroke-width="0.7"/><line x1="180" y1="46.0" x2="193.1" y2="46.0" stroke="#c9c9c9" stroke-width="0.7"/><line x1="180" y1="58.9" x2="196" y2="58.9" stroke="#e05a5a" stroke-width="1.2"/><rect x="180" y="66" width="15" height="10" fill="#999" opacity="0.6"/><rect x="180" y="77" width="5" height="4" fill="#333"/><rect x="190" y="77" width="5" height="4" fill="#333"/><rect x="152.8" y="98.2" width="24" height="27.3" fill="none" stroke="#d5d5d5" stroke-width="0.8"/><rect x="157" y="112" width="17" height="10" fill="#dfeadb"/><defs><linearGradient id="sa1" x1="0" y1="0" x2="1" y2="0.6"><stop offset="0" stop-color="#3f7cc9"/><stop offset="1" stop-color="#9fcbea"/></linearGradient><linearGradient id="sb1" x1="0" y1="0" x2="1" y2="1"><stop offset="0" stop-color="#3d5f87"/><stop offset="0.6" stop-color="#9fb6c6"/><stop offset="1" stop-color="#d3d4cf"/></linearGradient></defs><defs><linearGradient id="sc1" x1="0" y1="0.5" x2="1" y2="0"><stop offset="0" stop-color="#e4f2f8"/><stop offset="1" stop-color="#86bde6"/></linearGradient><linearGradient id="sd1" x1="0" y1="0" x2="1" y2="0.5"><stop offset="0" stop-color="#4a78cc"/><stop offset="1" stop-color="#b3d4ee"/></linearGradient></defs><g transform="translate(48.7,6.2)"><rect width="90.2" height="59.2" fill="url(#sc1)"/><path d="M0,28 L26,25 L27,55 L0,55 Z" fill="#c7bcb2"/><path d="M33,31 L55,28 L55,55 L33,55 Z" fill="#b9a99b"/><path d="M55,4 L65,3 L73,10 L73,55 L55,55 Z" fill="#c6c2c4"/><path d="M65,9 L73,10 L73,55 L66,55 Z" fill="#7d7b88"/><path d="M73,38 L80,40 L80,55 L73,55 Z" fill="#d0d4dc"/><rect x="0" y="47" width="90.2" height="12.2" fill="#86a765"/><path d="M82,30 Q90,34 90.2,45 L90.2,59 L80,59 Z" fill="#8ab56a"/><path d="M70,43 Q76,36 80,44 L80,59 L70,59 Z" fill="#7fae5e"/></g><g transform="translate(48.7,68.6)"><rect width="90.2" height="58.8" fill="url(#sd1)"/><path d="M20,25 Q30,12 50,14 Q45,22 28,30 Z" fill="#e8f0f8" opacity="0.9"/><path d="M0,0 L8,0 L13,55 L0,55 Z" fill="#d4d0cc"/><path d="M25,23 L58,20 L58,55 L25,55 Z" fill="#c6b4a2"/><path d="M60,12 L75,6 L85,14 L85,55 L60,55 Z" fill="#7c8190"/><path d="M75,6 L85,14 L85,55 L76,55 Z" fill="#cac6c6"/><rect x="0" y="46" width="90.2" height="12.8" fill="#7f9e62" opacity="0.9"/><circle cx="22" cy="44" r="6" fill="#7aa35a"/><circle cx="6" cy="45" r="5" fill="#86ad62"/></g></svg>
<div class="a" style="left:2333px;top:707px;width:83px;height:52px;background:#ee7955;border-radius:26px"></div><svg style="left:2333px;top:707px;" width="83" height="52" viewBox="0 0 83 52"><g transform="translate(29.4,10.9) scale(0.837)" fill="none" stroke="#ffffff" stroke-width="2.63" stroke-linejoin="round" stroke-linecap="round"><path d="M-11.1,23.7 L-3.5,3.2 Q0,-2.4 3.6,3.2 L11.2,23.7 M-11.1,23.7 Q0,33.1 11.2,23.7 M-6.7,13.4 Q0,16.6 7,13.4 M-8.7,19.7 Q0,23.1 8.5,19.7 M-13.8,22.4 L-18.2,24.8 Q-20,26.1 -18.2,27.2 L-1.6,35 Q0,35.7 1.6,35 L18.4,27.2 Q20.2,26.1 18.4,24.8 L13.4,22.4"/></g></svg><svg style="left:2433px;top:707px;" width="52" height="52" viewBox="0 0 52 52"><circle cx="26" cy="26" r="26" fill="#658887"/><g fill="#fff"><path d="M26.9,11.9 L40,11.9 L40,17.6 L29.2,28.4 L23.7,22.6 L31,15.3 L27.7,15.3 L20.4,22.7 L18.4,20.7 Z"/><path d="M22.6,23.5 L28.2,29.2 L20.6,36.3 L15.6,31 Z"/><path d="M14.6,31.8 L19.6,37.1 L11.9,39.8 Z"/></g></svg><svg style="left:2501px;top:705.5px;" width="95" height="55" viewBox="0 0 95 55"><rect width="95" height="55" rx="27.5" fill="#868b94"/><path d="M33.7,11.7 L48.3,11.7 L48.3,26.2 L29.3,44.7 L15.1,30.8 Z" fill="none" stroke="#fff" stroke-width="2.4" stroke-linejoin="miter"/><circle cx="39.9" cy="20.4" r="2.6" fill="none" stroke="#fff" stroke-width="2"/></svg><svg style="left:2638px;top:712.5px;" width="12" height="44" viewBox="0 0 12 44"><circle cx="6" cy="6.3" r="3.6" fill="#868b94"/><circle cx="6" cy="21.8" r="3.6" fill="#868b94"/><circle cx="6" cy="37.3" r="3.6" fill="#868b94"/></svg>
<div class="a" style="left:632px;top:923px;width:32px;height:31px;box-sizing:border-box;border:2px solid #6b717b;border-radius:4px;background:#fff"></div>
<svg style="left:704px;top:867px;" width="183" height="143" viewBox="0 0 183 143"><rect x="1" y="1" width="181" height="141" fill="#fff" stroke="#dcdce0" stroke-width="2.4"/><rect x="3.5" y="3.5" width="176" height="136" fill="none" stroke="#f1f1f2" stroke-width="2"/><rect x="10.1" y="12.1" width="162.9" height="118.2" fill="none" stroke="#d4d4d6" stroke-width="1.6"/><rect x="14" y="16" width="155" height="110" fill="none" stroke="#e3e3e3" stroke-width="1"/><rect x="16" y="22" width="28" height="2.2" fill="#777"/><rect x="16" y="27" width="42" height="2.2" fill="#777"/><rect x="15.5" y="34.4" width="87.7" height="33.9" fill="#e9ecea"/><path d="M15.5,50 L40,46 L70,52 L103.2,50 L103.2,68.3 L15.5,68.3 Z" fill="#5e7a45"/><path d="M15.5,60 L103.2,56 L103.2,68.3 L15.5,68.3 Z" fill="#6f8a55"/><path d="M55,54 L90,68.3 L103.2,68.3 L103.2,58 Z" fill="#8f9496"/><path d="M39,48 L44,40 L62,40 L62,55 L39,57 Z" fill="#c9c6c0"/><path d="M43,40 L60,38 L67,46 L48,48 Z" fill="#6b1414"/><path d="M80,55 Q80,35 88,33 Q96,35 96,55 Z" fill="#46583c"/><line x1="15.5" y1="71.0" x2="75.0" y2="71.0" stroke="#a3a3a3" stroke-width="1.0"/><line x1="15.5" y1="74.3" x2="75.0" y2="74.3" stroke="#a3a3a3" stroke-width="1.0"/><line x1="15.5" y1="77.6" x2="75.0" y2="77.6" stroke="#a3a3a3" stroke-width="1.0"/><line x1="15.5" y1="80.9" x2="75.0" y2="80.9" stroke="#a3a3a3" stroke-width="1.0"/><line x1="15.5" y1="84.2" x2="75.0" y2="84.2" stroke="#a3a3a3" stroke-width="1.0"/><line x1="15.5" y1="87.5" x2="75.0" y2="87.5" stroke="#a3a3a3" stroke-width="1.0"/><line x1="15.5" y1="90.8" x2="75.0" y2="90.8" stroke="#a3a3a3" stroke-width="1.0"/><line x1="15.5" y1="94.1" x2="75.0" y2="94.1" stroke="#a3a3a3" stroke-width="1.0"/><line x1="15.5" y1="97.4" x2="75.0" y2="97.4" stroke="#a3a3a3" stroke-width="1.0"/><line x1="15.5" y1="100.7" x2="75.0" y2="100.7" stroke="#a3a3a3" stroke-width="1.0"/><line x1="15.5" y1="104.0" x2="75.0" y2="104.0" stroke="#a3a3a3" stroke-width="1.0"/><line x1="15.5" y1="107.3" x2="75.0" y2="107.3" stroke="#a3a3a3" stroke-width="1.0"/><line x1="15.5" y1="110.6" x2="75.0" y2="110.6" stroke="#a3a3a3" stroke-width="1.0"/><line x1="15.5" y1="113.9" x2="75.0" y2="113.9" stroke="#a3a3a3" stroke-width="1.0"/><line x1="15.5" y1="117.2" x2="75.0" y2="117.2" stroke="#a3a3a3" stroke-width="1.0"/><line x1="15.5" y1="120.5" x2="75.0" y2="120.5" stroke="#a3a3a3" stroke-width="1.0"/><line x1="15.5" y1="123.8" x2="75.0" y2="123.8" stroke="#a3a3a3" stroke-width="1.0"/><rect x="15.5" y="70.2" width="59.6" height="55.2" fill="#000" opacity="0.05"/><rect x="107.5" y="20.3" width="39.3" height="22" fill="#5d5a45"/><rect x="107.5" y="33.3" width="39.3" height="9" fill="#3f3d33" opacity="0.8"/><rect x="107.5" y="46" width="39.3" height="22" fill="#d0c3a6"/><rect x="107.5" y="59" width="39.3" height="9" fill="#a8884c" opacity="0.8"/><rect x="107.5" y="73.6" width="39.3" height="22" fill="#7f8a93"/><rect x="107.5" y="86.6" width="39.3" height="9" fill="#5f5545" opacity="0.8"/><rect x="107.5" y="101.2" width="39.3" height="22" fill="#6f8fb0"/><rect x="107.5" y="114.2" width="39.3" height="9" fill="#7fa050" opacity="0.8"/><rect x="150.2" y="16" width="18.8" height="110" fill="#fff" stroke="#b5b5b5" stroke-width="1"/><rect x="151" y="70.4" width="17" height="25.6" fill="#c7c7c7"/><line x1="151" y1="74.0" x2="168.0" y2="74.0" stroke="#8f8f8f" stroke-width="0.6"/><line x1="151" y1="77.2" x2="168.0" y2="77.2" stroke="#8f8f8f" stroke-width="0.6"/><line x1="151" y1="80.4" x2="168.0" y2="80.4" stroke="#8f8f8f" stroke-width="0.6"/><line x1="151" y1="83.6" x2="168.0" y2="83.6" stroke="#8f8f8f" stroke-width="0.6"/><line x1="151" y1="86.8" x2="168.0" y2="86.8" stroke="#8f8f8f" stroke-width="0.6"/><line x1="151" y1="90.0" x2="168.0" y2="90.0" stroke="#8f8f8f" stroke-width="0.6"/><line x1="151" y1="93.2" x2="168.0" y2="93.2" stroke="#8f8f8f" stroke-width="0.6"/></svg>
<svg style="left:2433px;top:913px;" width="52" height="52" viewBox="0 0 52 52"><circle cx="26" cy="26" r="26" fill="#658887"/><g fill="#fff"><path d="M26.9,11.9 L40,11.9 L40,17.6 L29.2,28.4 L23.7,22.6 L31,15.3 L27.7,15.3 L20.4,22.7 L18.4,20.7 Z"/><path d="M22.6,23.5 L28.2,29.2 L20.6,36.3 L15.6,31 Z"/><path d="M14.6,31.8 L19.6,37.1 L11.9,39.8 Z"/></g></svg><svg style="left:2501px;top:911.5px;" width="95" height="55" viewBox="0 0 95 55"><rect width="95" height="55" rx="27.5" fill="#868b94"/><path d="M33.7,11.7 L48.3,11.7 L48.3,26.2 L29.3,44.7 L15.1,30.8 Z" fill="none" stroke="#fff" stroke-width="2.4" stroke-linejoin="miter"/><circle cx="39.9" cy="20.4" r="2.6" fill="none" stroke="#fff" stroke-width="2"/></svg><svg style="left:2638px;top:918.5px;" width="12" height="44" viewBox="0 0 12 44"><circle cx="6" cy="6.3" r="3.6" fill="#868b94"/><circle cx="6" cy="21.8" r="3.6" fill="#868b94"/><circle cx="6" cy="37.3" r="3.6" fill="#868b94"/></svg>
<div class="a" style="left:632px;top:1129px;width:32px;height:31px;box-sizing:border-box;border:2px solid #6b717b;border-radius:4px;background:#fff"></div>
<svg style="left:696px;top:1073px;" width="200" height="143" viewBox="0 0 200 143"><rect x="1" y="1" width="198" height="141" fill="#fff" stroke="#dcdce0" stroke-width="2.4"/><rect x="3.5" y="3.5" width="193" height="136" fill="none" stroke="#f1f1f2" stroke-width="2"/><rect x="8" y="5" width="184" height="133" fill="none" stroke="#ececec" stroke-width="1.2"/><rect x="182.4" y="5" width="13.5" height="133" fill="#fff" stroke="#b8b8b8" stroke-width="1.1"/><line x1="183" y1="12.0" x2="195.0" y2="12.0" stroke="#c4c4c4" stroke-width="0.8"/><line x1="183" y1="21.0" x2="195.0" y2="21.0" stroke="#c4c4c4" stroke-width="0.8"/><line x1="183" y1="30.0" x2="195.0" y2="30.0" stroke="#c4c4c4" stroke-width="0.8"/><line x1="183" y1="39.0" x2="195.0" y2="39.0" stroke="#c4c4c4" stroke-width="0.8"/><line x1="183" y1="48.0" x2="195.0" y2="48.0" stroke="#c4c4c4" stroke-width="0.8"/><line x1="183" y1="57.0" x2="195.0" y2="57.0" stroke="#c4c4c4" stroke-width="0.8"/><line x1="183" y1="66.0" x2="195.0" y2="66.0" stroke="#c4c4c4" stroke-width="0.8"/><line x1="183" y1="75.0" x2="195.0" y2="75.0" stroke="#c4c4c4" stroke-width="0.8"/><line x1="183" y1="84.0" x2="195.0" y2="84.0" stroke="#c4c4c4" stroke-width="0.8"/><line x1="183" y1="93.0" x2="195.0" y2="93.0" stroke="#c4c4c4" stroke-width="0.8"/><line x1="183" y1="102.0" x2="195.0" y2="102.0" stroke="#c4c4c4" stroke-width="0.8"/><line x1="183" y1="111.0" x2="195.0" y2="111.0" stroke="#c4c4c4" stroke-width="0.8"/><line x1="183" y1="120.0" x2="195.0" y2="120.0" stroke="#c4c4c4" stroke-width="0.8"/><line x1="183" y1="129.0" x2="195.0" y2="129.0" stroke="#c4c4c4" stroke-width="0.8"/><line x1="18" y1="14.0" x2="26.8" y2="14.0" stroke="#dadada" stroke-width="0.8"/><line x1="18" y1="18.0" x2="31.8" y2="18.0" stroke="#dadada" stroke-width="0.8"/><line x1="18" y1="22.0" x2="29.7" y2="22.0" stroke="#dadada" stroke-width="0.8"/><line x1="18" y1="26.0" x2="27.5" y2="26.0" stroke="#dadada" stroke-width="0.8"/><line x1="18" y1="30.0" x2="32.6" y2="30.0" stroke="#dadada" stroke-width="0.8"/><line x1="18" y1="34.0" x2="30.4" y2="34.0" stroke="#dadada" stroke-width="0.8"/><line x1="18" y1="38.0" x2="28.2" y2="38.0" stroke="#dadada" stroke-width="0.8"/><line x1="18" y1="42.0" x2="33.3" y2="42.0" stroke="#dadada" stroke-width="0.8"/><line x1="18" y1="46.0" x2="31.1" y2="46.0" stroke="#dadada" stroke-width="0.8"/><line x1="18" y1="50.0" x2="29.0" y2="50.0" stroke="#dadada" stroke-width="0.8"/><line x1="40" y1="18.0" x2="45.5" y2="18.0" stroke="#d5d5d5" stroke-width="0.8"/><line x1="40" y1="22.0" x2="48.6" y2="22.0" stroke="#d5d5d5" stroke-width="0.8"/><line x1="40" y1="26.0" x2="47.3" y2="26.0" stroke="#d5d5d5" stroke-width="0.8"/><line x1="40" y1="30.0" x2="46.0" y2="30.0" stroke="#d5d5d5" stroke-width="0.8"/><line x1="40" y1="34.0" x2="49.1" y2="34.0" stroke="#d5d5d5" stroke-width="0.8"/><line x1="40" y1="38.0" x2="47.8" y2="38.0" stroke="#d5d5d5" stroke-width="0.8"/><line x1="40" y1="42.0" x2="46.4" y2="42.0" stroke="#d5d5d5" stroke-width="0.8"/><line x1="40" y1="46.0" x2="49.5" y2="46.0" stroke="#d5d5d5" stroke-width="0.8"/><line x1="40" y1="50.0" x2="48.2" y2="50.0" stroke="#d5d5d5" stroke-width="0.8"/><line x1="52" y1="14.0" x2="59.7" y2="14.0" stroke="#dadada" stroke-width="0.8"/><line x1="52" y1="18.0" x2="64.1" y2="18.0" stroke="#dadada" stroke-width="0.8"/><line x1="52" y1="22.0" x2="62.2" y2="22.0" stroke="#dadada" stroke-width="0.8"/><line x1="52" y1="26.0" x2="60.3" y2="26.0" stroke="#dadada" stroke-width="0.8"/><line x1="52" y1="30.0" x2="64.7" y2="30.0" stroke="#dadada" stroke-width="0.8"/><line x1="52" y1="34.0" x2="62.9" y2="34.0" stroke="#dadada" stroke-width="0.8"/><line x1="52" y1="38.0" x2="61.0" y2="38.0" stroke="#dadada" stroke-width="0.8"/><line x1="52" y1="42.0" x2="65.4" y2="42.0" stroke="#dadada" stroke-width="0.8"/><line x1="52" y1="46.0" x2="63.5" y2="46.0" stroke="#dadada" stroke-width="0.8"/><line x1="52" y1="50.0" x2="61.6" y2="50.0" stroke="#dadada" stroke-width="0.8"/><line x1="68" y1="18.0" x2="74.6" y2="18.0" stroke="#d5d5d5" stroke-width="0.8"/><line x1="68" y1="22.0" x2="78.4" y2="22.0" stroke="#d5d5d5" stroke-width="0.8"/><line x1="68" y1="26.0" x2="76.8" y2="26.0" stroke="#d5d5d5" stroke-width="0.8"/><line x1="68" y1="30.0" x2="75.1" y2="30.0" stroke="#d5d5d5" stroke-width="0.8"/><line x1="68" y1="34.0" x2="78.9" y2="34.0" stroke="#d5d5d5" stroke-width="0.8"/><line x1="68" y1="38.0" x2="77.3" y2="38.0" stroke="#d5d5d5" stroke-width="0.8"/><line x1="68" y1="42.0" x2="75.7" y2="42.0" stroke="#d5d5d5" stroke-width="0.8"/><line x1="68" y1="46.0" x2="79.5" y2="46.0" stroke="#d5d5d5" stroke-width="0.8"/><line x1="18" y1="60.0" x2="24.6" y2="60.0" stroke="#dddddd" stroke-width="0.8"/><line x1="18" y1="64.0" x2="28.4" y2="64.0" stroke="#dddddd" stroke-width="0.8"/><line x1="18" y1="68.0" x2="26.8" y2="68.0" stroke="#dddddd" stroke-width="0.8"/><line x1="18" y1="72.0" x2="25.1" y2="72.0" stroke="#dddddd" stroke-width="0.8"/><line x1="18" y1="76.0" x2="28.9" y2="76.0" stroke="#dddddd" stroke-width="0.8"/><line x1="18" y1="80.0" x2="27.3" y2="80.0" stroke="#dddddd" stroke-width="0.8"/><line x1="18" y1="84.0" x2="25.7" y2="84.0" stroke="#dddddd" stroke-width="0.8"/><line x1="18" y1="88.0" x2="29.5" y2="88.0" stroke="#dddddd" stroke-width="0.8"/><line x1="18" y1="92.0" x2="27.8" y2="92.0" stroke="#dddddd" stroke-width="0.8"/><line x1="18" y1="96.0" x2="26.2" y2="96.0" stroke="#dddddd" stroke-width="0.8"/><line x1="18" y1="100.0" x2="24.6" y2="100.0" stroke="#dddddd" stroke-width="0.8"/><line x1="86.5" y1="10.0" x2="95.0" y2="10.0" stroke="#a6a6a6" stroke-width="1.0"/><line x1="86.5" y1="13.6" x2="99.9" y2="13.6" stroke="#a6a6a6" stroke-width="1.0"/><line x1="86.5" y1="17.2" x2="97.8" y2="17.2" stroke="#a6a6a6" stroke-width="1.0"/><line x1="86.5" y1="20.8" x2="95.7" y2="20.8" stroke="#a6a6a6" stroke-width="1.0"/><line x1="86.5" y1="24.4" x2="100.6" y2="24.4" stroke="#a6a6a6" stroke-width="1.0"/><line x1="86.5" y1="28.0" x2="98.5" y2="28.0" stroke="#a6a6a6" stroke-width="1.0"/><line x1="86.5" y1="31.6" x2="96.4" y2="31.6" stroke="#a6a6a6" stroke-width="1.0"/><line x1="86.5" y1="35.2" x2="101.3" y2="35.2" stroke="#a6a6a6" stroke-width="1.0"/><line x1="86.5" y1="38.8" x2="99.2" y2="38.8" stroke="#a6a6a6" stroke-width="1.0"/><line x1="86.5" y1="42.4" x2="97.1" y2="42.4" stroke="#a6a6a6" stroke-width="1.0"/><line x1="86.5" y1="46.0" x2="95.0" y2="46.0" stroke="#a6a6a6" stroke-width="1.0"/><line x1="86.5" y1="49.6" x2="99.9" y2="49.6" stroke="#a6a6a6" stroke-width="1.0"/><line x1="86.5" y1="53.2" x2="97.8" y2="53.2" stroke="#a6a6a6" stroke-width="1.0"/><line x1="86.5" y1="56.8" x2="95.7" y2="56.8" stroke="#a6a6a6" stroke-width="1.0"/><line x1="86.5" y1="60.4" x2="100.6" y2="60.4" stroke="#a6a6a6" stroke-width="1.0"/><line x1="86.5" y1="64.0" x2="98.5" y2="64.0" stroke="#a6a6a6" stroke-width="1.0"/><line x1="86.5" y1="67.6" x2="96.4" y2="67.6" stroke="#a6a6a6" stroke-width="1.0"/><line x1="86.5" y1="71.2" x2="101.3" y2="71.2" stroke="#a6a6a6" stroke-width="1.0"/><line x1="86.5" y1="74.8" x2="99.2" y2="74.8" stroke="#a6a6a6" stroke-width="1.0"/><line x1="86.5" y1="78.4" x2="97.1" y2="78.4" stroke="#a6a6a6" stroke-width="1.0"/><line x1="86.5" y1="82.0" x2="95.0" y2="82.0" stroke="#a6a6a6" stroke-width="1.0"/><line x1="86.5" y1="85.6" x2="99.9" y2="85.6" stroke="#a6a6a6" stroke-width="1.0"/><line x1="86.5" y1="89.2" x2="97.8" y2="89.2" stroke="#a6a6a6" stroke-width="1.0"/><line x1="86.5" y1="92.8" x2="95.7" y2="92.8" stroke="#a6a6a6" stroke-width="1.0"/><line x1="86.5" y1="96.4" x2="100.6" y2="96.4" stroke="#a6a6a6" stroke-width="1.0"/><line x1="86.5" y1="100.0" x2="98.5" y2="100.0" stroke="#a6a6a6" stroke-width="1.0"/><line x1="86.5" y1="103.6" x2="96.4" y2="103.6" stroke="#a6a6a6" stroke-width="1.0"/><line x1="86.5" y1="107.2" x2="101.3" y2="107.2" stroke="#a6a6a6" stroke-width="1.0"/><line x1="86.5" y1="110.8" x2="99.2" y2="110.8" stroke="#a6a6a6" stroke-width="1.0"/><line x1="86.5" y1="114.4" x2="97.1" y2="114.4" stroke="#a6a6a6" stroke-width="1.0"/><line x1="86.5" y1="118.0" x2="95.0" y2="118.0" stroke="#a6a6a6" stroke-width="1.0"/><line x1="86.5" y1="121.6" x2="99.9" y2="121.6" stroke="#a6a6a6" stroke-width="1.0"/><line x1="106.8" y1="10.0" x2="117.4" y2="10.0" stroke="#b3b3b3" stroke-width="1.0"/><line x1="106.8" y1="13.6" x2="123.4" y2="13.6" stroke="#b3b3b3" stroke-width="1.0"/><line x1="106.8" y1="17.2" x2="120.8" y2="17.2" stroke="#b3b3b3" stroke-width="1.0"/><line x1="106.8" y1="20.8" x2="118.2" y2="20.8" stroke="#b3b3b3" stroke-width="1.0"/><line x1="106.8" y1="24.4" x2="124.3" y2="24.4" stroke="#b3b3b3" stroke-width="1.0"/><line x1="106.8" y1="28.0" x2="121.7" y2="28.0" stroke="#b3b3b3" stroke-width="1.0"/><line x1="106.8" y1="31.6" x2="119.1" y2="31.6" stroke="#b3b3b3" stroke-width="1.0"/><line x1="106.8" y1="35.2" x2="125.1" y2="35.2" stroke="#b3b3b3" stroke-width="1.0"/><line x1="106.8" y1="38.8" x2="122.5" y2="38.8" stroke="#b3b3b3" stroke-width="1.0"/><line x1="106.8" y1="42.4" x2="120.0" y2="42.4" stroke="#b3b3b3" stroke-width="1.0"/><line x1="106.8" y1="46.0" x2="117.4" y2="46.0" stroke="#b3b3b3" stroke-width="1.0"/><line x1="106.8" y1="49.6" x2="123.4" y2="49.6" stroke="#b3b3b3" stroke-width="1.0"/><line x1="106.8" y1="53.2" x2="120.8" y2="53.2" stroke="#b3b3b3" stroke-width="1.0"/><line x1="106.8" y1="56.8" x2="118.2" y2="56.8" stroke="#b3b3b3" stroke-width="1.0"/><line x1="106.8" y1="60.4" x2="124.3" y2="60.4" stroke="#b3b3b3" stroke-width="1.0"/><line x1="106.8" y1="64.0" x2="121.7" y2="64.0" stroke="#b3b3b3" stroke-width="1.0"/><line x1="106.8" y1="67.6" x2="119.1" y2="67.6" stroke="#b3b3b3" stroke-width="1.0"/><line x1="106.8" y1="71.2" x2="125.1" y2="71.2" stroke="#b3b3b3" stroke-width="1.0"/><line x1="106.8" y1="74.8" x2="122.5" y2="74.8" stroke="#b3b3b3" stroke-width="1.0"/><line x1="106.8" y1="78.4" x2="120.0" y2="78.4" stroke="#b3b3b3" stroke-width="1.0"/><line x1="106.8" y1="82.0" x2="117.4" y2="82.0" stroke="#b3b3b3" stroke-width="1.0"/><line x1="106.8" y1="85.6" x2="123.4" y2="85.6" stroke="#b3b3b3" stroke-width="1.0"/><line x1="106.8" y1="89.2" x2="120.8" y2="89.2" stroke="#b3b3b3" stroke-width="1.0"/><line x1="106.8" y1="92.8" x2="118.2" y2="92.8" stroke="#b3b3b3" stroke-width="1.0"/><line x1="106.8" y1="96.4" x2="124.3" y2="96.4" stroke="#b3b3b3" stroke-width="1.0"/><line x1="106.8" y1="100.0" x2="121.7" y2="100.0" stroke="#b3b3b3" stroke-width="1.0"/><line x1="106.8" y1="103.6" x2="119.1" y2="103.6" stroke="#b3b3b3" stroke-width="1.0"/><line x1="106.8" y1="107.2" x2="125.1" y2="107.2" stroke="#b3b3b3" stroke-width="1.0"/><line x1="106.8" y1="110.8" x2="122.5" y2="110.8" stroke="#b3b3b3" stroke-width="1.0"/><line x1="106.8" y1="114.4" x2="120.0" y2="114.4" stroke="#b3b3b3" stroke-width="1.0"/><line x1="106.8" y1="118.0" x2="117.4" y2="118.0" stroke="#b3b3b3" stroke-width="1.0"/><line x1="106.8" y1="121.6" x2="123.4" y2="121.6" stroke="#b3b3b3" stroke-width="1.0"/><line x1="106.8" y1="125.2" x2="120.8" y2="125.2" stroke="#b3b3b3" stroke-width="1.0"/><line x1="106.8" y1="128.8" x2="118.2" y2="128.8" stroke="#b3b3b3" stroke-width="1.0"/><line x1="106.8" y1="132.4" x2="124.3" y2="132.4" stroke="#b3b3b3" stroke-width="1.0"/><line x1="106.8" y1="136.0" x2="121.7" y2="136.0" stroke="#b3b3b3" stroke-width="1.0"/><rect x="130" y="11" width="3.6" height="36" fill="#555" opacity="0.8"/><line x1="152" y1="8.0" x2="166.3" y2="8.0" stroke="#d0d0d0" stroke-width="0.8"/><line x1="152" y1="12.5" x2="174.5" y2="12.5" stroke="#d0d0d0" stroke-width="0.8"/><line x1="152" y1="17.0" x2="171.0" y2="17.0" stroke="#d0d0d0" stroke-width="0.8"/><line x1="152" y1="21.5" x2="167.5" y2="21.5" stroke="#d0d0d0" stroke-width="0.8"/><line x1="152" y1="26.0" x2="175.7" y2="26.0" stroke="#d0d0d0" stroke-width="0.8"/><line x1="152" y1="30.5" x2="172.2" y2="30.5" stroke="#d0d0d0" stroke-width="0.8"/><line x1="152" y1="35.0" x2="168.6" y2="35.0" stroke="#d0d0d0" stroke-width="0.8"/><line x1="152" y1="39.5" x2="176.8" y2="39.5" stroke="#d0d0d0" stroke-width="0.8"/><line x1="152" y1="44.0" x2="173.3" y2="44.0" stroke="#d0d0d0" stroke-width="0.8"/><line x1="152" y1="48.5" x2="169.8" y2="48.5" stroke="#d0d0d0" stroke-width="0.8"/><line x1="152" y1="53.0" x2="166.3" y2="53.0" stroke="#d0d0d0" stroke-width="0.8"/><line x1="152" y1="57.5" x2="174.5" y2="57.5" stroke="#d0d0d0" stroke-width="0.8"/><line x1="152" y1="62.0" x2="171.0" y2="62.0" stroke="#d0d0d0" stroke-width="0.8"/><line x1="152" y1="66.5" x2="167.5" y2="66.5" stroke="#d0d0d0" stroke-width="0.8"/><line x1="152" y1="71.0" x2="175.7" y2="71.0" stroke="#d0d0d0" stroke-width="0.8"/><line x1="152" y1="75.5" x2="172.2" y2="75.5" stroke="#d0d0d0" stroke-width="0.8"/><line x1="152" y1="80.0" x2="168.6" y2="80.0" stroke="#d0d0d0" stroke-width="0.8"/><line x1="152" y1="84.5" x2="176.8" y2="84.5" stroke="#d0d0d0" stroke-width="0.8"/><line x1="152" y1="89.0" x2="173.3" y2="89.0" stroke="#d0d0d0" stroke-width="0.8"/><line x1="152" y1="93.5" x2="169.8" y2="93.5" stroke="#d0d0d0" stroke-width="0.8"/><line x1="152" y1="98.0" x2="166.3" y2="98.0" stroke="#d0d0d0" stroke-width="0.8"/><line x1="152" y1="102.5" x2="174.5" y2="102.5" stroke="#d0d0d0" stroke-width="0.8"/><line x1="152" y1="107.0" x2="171.0" y2="107.0" stroke="#d0d0d0" stroke-width="0.8"/><line x1="152" y1="111.5" x2="167.5" y2="111.5" stroke="#d0d0d0" stroke-width="0.8"/><line x1="152" y1="116.0" x2="175.7" y2="116.0" stroke="#d0d0d0" stroke-width="0.8"/><line x1="152" y1="120.5" x2="172.2" y2="120.5" stroke="#d0d0d0" stroke-width="0.8"/><line x1="152" y1="125.0" x2="168.6" y2="125.0" stroke="#d0d0d0" stroke-width="0.8"/><line x1="152" y1="129.5" x2="176.8" y2="129.5" stroke="#d0d0d0" stroke-width="0.8"/><line x1="152" y1="134.0" x2="173.3" y2="134.0" stroke="#d0d0d0" stroke-width="0.8"/><line x1="152" y1="138.5" x2="169.8" y2="138.5" stroke="#d0d0d0" stroke-width="0.8"/><rect x="13" y="114" width="33" height="20.7" fill="#e6e6e6"/><rect x="49" y="114" width="33" height="20.7" fill="#e6e6e6"/><rect x="29" y="122" width="6" height="3" fill="#999"/><rect x="62" y="120" width="4" height="10" fill="#888"/></svg>
<div class="a" style="left:2333px;top:1119px;width:83px;height:52px;background:#ee7955;border-radius:26px"></div><svg style="left:2333px;top:1119px;" width="83" height="52" viewBox="0 0 83 52"><g transform="translate(29.4,10.9) scale(0.837)" fill="none" stroke="#ffffff" stroke-width="2.63" stroke-linejoin="round" stroke-linecap="round"><path d="M-11.1,23.7 L-3.5,3.2 Q0,-2.4 3.6,3.2 L11.2,23.7 M-11.1,23.7 Q0,33.1 11.2,23.7 M-6.7,13.4 Q0,16.6 7,13.4 M-8.7,19.7 Q0,23.1 8.5,19.7 M-13.8,22.4 L-18.2,24.8 Q-20,26.1 -18.2,27.2 L-1.6,35 Q0,35.7 1.6,35 L18.4,27.2 Q20.2,26.1 18.4,24.8 L13.4,22.4"/></g></svg><svg style="left:2433px;top:1119px;" width="52" height="52" viewBox="0 0 52 52"><circle cx="26" cy="26" r="26" fill="#658887"/><g fill="#fff"><path d="M26.9,11.9 L40,11.9 L40,17.6 L29.2,28.4 L23.7,22.6 L31,15.3 L27.7,15.3 L20.4,22.7 L18.4,20.7 Z"/><path d="M22.6,23.5 L28.2,29.2 L20.6,36.3 L15.6,31 Z"/><path d="M14.6,31.8 L19.6,37.1 L11.9,39.8 Z"/></g></svg><svg style="left:2501px;top:1117.5px;" width="95" height="55" viewBox="0 0 95 55"><rect width="95" height="55" rx="27.5" fill="#868b94"/><path d="M33.7,11.7 L48.3,11.7 L48.3,26.2 L29.3,44.7 L15.1,30.8 Z" fill="none" stroke="#fff" stroke-width="2.4" stroke-linejoin="miter"/><circle cx="39.9" cy="20.4" r="2.6" fill="none" stroke="#fff" stroke-width="2"/></svg><svg style="left:2638px;top:1124.5px;" width="12" height="44" viewBox="0 0 12 44"><circle cx="6" cy="6.3" r="3.6" fill="#868b94"/><circle cx="6" cy="21.8" r="3.6" fill="#868b94"/><circle cx="6" cy="37.3" r="3.6" fill="#868b94"/></svg>
<div class="a" style="left:632px;top:1335px;width:32px;height:31px;box-sizing:border-box;border:2px solid #6b717b;border-radius:4px;background:#fff"></div>
<svg style="left:696px;top:1279px;" width="200" height="143" viewBox="0 0 200 143"><rect x="1" y="1" width="198" height="141" fill="#fff" stroke="#dcdce0" stroke-width="2.4"/><rect x="3.5" y="3.5" width="193" height="136" fill="none" stroke="#f1f1f2" stroke-width="2"/><rect x="8" y="5" width="184" height="133" fill="none" stroke="#ececec" stroke-width="1.2"/><rect x="182.4" y="5" width="13.5" height="133" fill="#fff" stroke="#b8b8b8" stroke-width="1.1"/><line x1="183" y1="12.0" x2="195.0" y2="12.0" stroke="#c4c4c4" stroke-width="0.8"/><line x1="183" y1="21.0" x2="195.0" y2="21.0" stroke="#c4c4c4" stroke-width="0.8"/><line x1="183" y1="30.0" x2="195.0" y2="30.0" stroke="#c4c4c4" stroke-width="0.8"/><line x1="183" y1="39.0" x2="195.0" y2="39.0" stroke="#c4c4c4" stroke-width="0.8"/><line x1="183" y1="48.0" x2="195.0" y2="48.0" stroke="#c4c4c4" stroke-width="0.8"/><line x1="183" y1="57.0" x2="195.0" y2="57.0" stroke="#c4c4c4" stroke-width="0.8"/><line x1="183" y1="66.0" x2="195.0" y2="66.0" stroke="#c4c4c4" stroke-width="0.8"/><line x1="183" y1="75.0" x2="195.0" y2="75.0" stroke="#c4c4c4" stroke-width="0.8"/><line x1="183" y1="84.0" x2="195.0" y2="84.0" stroke="#c4c4c4" stroke-width="0.8"/><line x1="183" y1="93.0" x2="195.0" y2="93.0" stroke="#c4c4c4" stroke-width="0.8"/><line x1="183" y1="102.0" x2="195.0" y2="102.0" stroke="#c4c4c4" stroke-width="0.8"/><line x1="183" y1="111.0" x2="195.0" y2="111.0" stroke="#c4c4c4" stroke-width="0.8"/><line x1="183" y1="120.0" x2="195.0" y2="120.0" stroke="#c4c4c4" stroke-width="0.8"/><line x1="183" y1="129.0" x2="195.0" y2="129.0" stroke="#c4c4c4" stroke-width="0.8"/><path d="M38.7,12 L55,12 L55,58 Q58,95 78,118.7 L70,122 Q46,100 40,60 Z" fill="#e2e2e2" stroke="#666" stroke-width="1.2"/><path d="M44,16 L52,16 L52,60 Q55,92 72,114" fill="none" stroke="#777" stroke-width="1.6"/><rect x="41" y="14" width="8" height="6" fill="#fff" stroke="#666" stroke-width="0.8"/><rect x="92" y="107.8" width="42" height="19.7" fill="#f0f0f0" stroke="#555" stroke-width="1"/><rect x="92" y="109" width="42" height="4" fill="#666"/><rect x="92" y="121" width="42" height="4" fill="#777"/><path d="M134,108 Q150,96 168,104 L160,127 Q148,120 134,127 Z" fill="#ececec" stroke="#888" stroke-width="1"/><rect x="28" y="120" width="16" height="3" fill="#777"/><rect x="168" y="124" width="4" height="4" fill="#333"/></svg>
<svg style="left:2433px;top:1325px;" width="52" height="52" viewBox="0 0 52 52"><circle cx="26" cy="26" r="26" fill="#658887"/><g fill="#fff"><path d="M26.9,11.9 L40,11.9 L40,17.6 L29.2,28.4 L23.7,22.6 L31,15.3 L27.7,15.3 L20.4,22.7 L18.4,20.7 Z"/><path d="M22.6,23.5 L28.2,29.2 L20.6,36.3 L15.6,31 Z"/><path d="M14.6,31.8 L19.6,37.1 L11.9,39.8 Z"/></g></svg><svg style="left:2501px;top:1323.5px;" width="95" height="55" viewBox="0 0 95 55"><rect width="95" height="55" rx="27.5" fill="#868b94"/><path d="M33.7,11.7 L48.3,11.7 L48.3,26.2 L29.3,44.7 L15.1,30.8 Z" fill="none" stroke="#fff" stroke-width="2.4" stroke-linejoin="miter"/><circle cx="39.9" cy="20.4" r="2.6" fill="none" stroke="#fff" stroke-width="2"/></svg><svg style="left:2638px;top:1330.5px;" width="12" height="44" viewBox="0 0 12 44"><circle cx="6" cy="6.3" r="3.6" fill="#868b94"/><circle cx="6" cy="21.8" r="3.6" fill="#868b94"/><circle cx="6" cy="37.3" r="3.6" fill="#868b94"/></svg>
<div class="a" style="left:632px;top:1541px;width:32px;height:31px;box-sizing:border-box;border:2px solid #6b717b;border-radius:4px;background:#fff"></div>
<svg style="left:696px;top:1485.6px;" width="200" height="143" viewBox="0 0 200 143"><rect x="1" y="1" width="198" height="141" fill="#fff" stroke="#dcdce0" stroke-width="2.4"/><rect x="3.5" y="3.5" width="193" height="136" fill="none" stroke="#f1f1f2" stroke-width="2"/><rect x="8" y="5" width="184" height="133" fill="none" stroke="#ececec" stroke-width="1.2"/><rect x="182.4" y="5" width="13.5" height="133" fill="#fff" stroke="#b8b8b8" stroke-width="1.1"/><line x1="183" y1="12.0" x2="195.0" y2="12.0" stroke="#c4c4c4" stroke-width="0.8"/><line x1="183" y1="21.0" x2="195.0" y2="21.0" stroke="#c4c4c4" stroke-width="0.8"/><line x1="183" y1="30.0" x2="195.0" y2="30.0" stroke="#c4c4c4" stroke-width="0.8"/><line x1="183" y1="39.0" x2="195.0" y2="39.0" stroke="#c4c4c4" stroke-width="0.8"/><line x1="183" y1="48.0" x2="195.0" y2="48.0" stroke="#c4c4c4" stroke-width="0.8"/><line x1="183" y1="57.0" x2="195.0" y2="57.0" stroke="#c4c4c4" stroke-width="0.8"/><line x1="183" y1="66.0" x2="195.0" y2="66.0" stroke="#c4c4c4" stroke-width="0.8"/><line x1="183" y1="75.0" x2="195.0" y2="75.0" stroke="#c4c4c4" stroke-width="0.8"/><line x1="183" y1="84.0" x2="195.0" y2="84.0" stroke="#c4c4c4" stroke-width="0.8"/><line x1="183" y1="93.0" x2="195.0" y2="93.0" stroke="#c4c4c4" stroke-width="0.8"/><line x1="183" y1="102.0" x2="195.0" y2="102.0" stroke="#c4c4c4" stroke-width="0.8"/><line x1="183" y1="111.0" x2="195.0" y2="111.0" stroke="#c4c4c4" stroke-width="0.8"/><line x1="183" y1="120.0" x2="195.0" y2="120.0" stroke="#c4c4c4" stroke-width="0.8"/><line x1="183" y1="129.0" x2="195.0" y2="129.0" stroke="#c4c4c4" stroke-width="0.8"/><g transform="translate(40,8) scale(1)" fill="none" stroke="#8a8a8a" stroke-width="1.1"><path d="M0,22 L6,6 L20,0 L30,10 M12,4 L12,26 M4,26 L34,26 M22,2 L22,26"/></g><g transform="translate(40,30) scale(0.9)" fill="none" stroke="#8a8a8a" stroke-width="1.1"><path d="M0,22 L6,6 L20,0 L30,10 M12,4 L12,26 M4,26 L34,26 M22,2 L22,26"/></g><g transform="translate(40,58) scale(0.9)" fill="none" stroke="#8a8a8a" stroke-width="1.1"><path d="M0,22 L6,6 L20,0 L30,10 M12,4 L12,26 M4,26 L34,26 M22,2 L22,26"/></g><g transform="translate(85,10) scale(1)" fill="none" stroke="#8a8a8a" stroke-width="1.1"><path d="M0,22 L6,6 L20,0 L30,10 M12,4 L12,26 M4,26 L34,26 M22,2 L22,26"/></g><g transform="translate(85,48) scale(1)" fill="none" stroke="#8a8a8a" stroke-width="1.1"><path d="M0,22 L6,6 L20,0 L30,10 M12,4 L12,26 M4,26 L34,26 M22,2 L22,26"/></g><g transform="translate(85,88) scale(1)" fill="none" stroke="#8a8a8a" stroke-width="1.1"><path d="M0,22 L6,6 L20,0 L30,10 M12,4 L12,26 M4,26 L34,26 M22,2 L22,26"/></g><g transform="translate(12,55) scale(0.8)" fill="none" stroke="#8a8a8a" stroke-width="1.1"><path d="M0,22 L6,6 L20,0 L30,10 M12,4 L12,26 M4,26 L34,26 M22,2 L22,26"/></g><g transform="translate(12,88) scale(0.8)" fill="none" stroke="#8a8a8a" stroke-width="1.1"><path d="M0,22 L6,6 L20,0 L30,10 M12,4 L12,26 M4,26 L34,26 M22,2 L22,26"/></g><g transform="translate(40,90) scale(1)" fill="none" stroke="#8a8a8a" stroke-width="1.1"><path d="M0,22 L6,6 L20,0 L30,10 M12,4 L12,26 M4,26 L34,26 M22,2 L22,26"/></g><rect x="145" y="6" width="34" height="40" fill="#f2f2f2"/><line x1="146" y1="8.0" x2="178.0" y2="8.0" stroke="#a8a8a8" stroke-width="0.6"/><line x1="146" y1="11.0" x2="178.0" y2="11.0" stroke="#a8a8a8" stroke-width="0.6"/><line x1="146" y1="14.0" x2="178.0" y2="14.0" stroke="#a8a8a8" stroke-width="0.6"/><line x1="146" y1="17.0" x2="178.0" y2="17.0" stroke="#a8a8a8" stroke-width="0.6"/><line x1="146" y1="20.0" x2="178.0" y2="20.0" stroke="#a8a8a8" stroke-width="0.6"/><line x1="146" y1="23.0" x2="178.0" y2="23.0" stroke="#a8a8a8" stroke-width="0.6"/><line x1="146" y1="26.0" x2="178.0" y2="26.0" stroke="#a8a8a8" stroke-width="0.6"/><line x1="146" y1="29.0" x2="178.0" y2="29.0" stroke="#a8a8a8" stroke-width="0.6"/><line x1="146" y1="32.0" x2="178.0" y2="32.0" stroke="#a8a8a8" stroke-width="0.6"/><line x1="146" y1="35.0" x2="178.0" y2="35.0" stroke="#a8a8a8" stroke-width="0.6"/><line x1="146" y1="38.0" x2="178.0" y2="38.0" stroke="#a8a8a8" stroke-width="0.6"/><line x1="146" y1="41.0" x2="178.0" y2="41.0" stroke="#a8a8a8" stroke-width="0.6"/><line x1="146" y1="44.0" x2="178.0" y2="44.0" stroke="#a8a8a8" stroke-width="0.6"/><g fill="none" stroke="#999" stroke-width="1"><path d="M146,50 L152,50 L152,70 M160,50 L168,50 L168,70 M146,80 L152,80 L152,100 M160,80 L168,80 L168,100"/></g></svg>
<svg style="left:2433px;top:1531px;" width="52" height="52" viewBox="0 0 52 52"><circle cx="26" cy="26" r="26" fill="#658887"/><g fill="#fff"><path d="M26.9,11.9 L40,11.9 L40,17.6 L29.2,28.4 L23.7,22.6 L31,15.3 L27.7,15.3 L20.4,22.7 L18.4,20.7 Z"/><path d="M22.6,23.5 L28.2,29.2 L20.6,36.3 L15.6,31 Z"/><path d="M14.6,31.8 L19.6,37.1 L11.9,39.8 Z"/></g></svg><svg style="left:2501px;top:1529.5px;" width="95" height="55" viewBox="0 0 95 55"><rect width="95" height="55" rx="27.5" fill="#868b94"/><path d="M33.7,11.7 L48.3,11.7 L48.3,26.2 L29.3,44.7 L15.1,30.8 Z" fill="none" stroke="#fff" stroke-width="2.4" stroke-linejoin="miter"/><circle cx="39.9" cy="20.4" r="2.6" fill="none" stroke="#fff" stroke-width="2"/></svg><svg style="left:2638px;top:1536.5px;" width="12" height="44" viewBox="0 0 12 44"><circle cx="6" cy="6.3" r="3.6" fill="#868b94"/><circle cx="6" cy="21.8" r="3.6" fill="#868b94"/><circle cx="6" cy="37.3" r="3.6" fill="#868b94"/></svg>
<div class="a" style="left:632px;top:1754px;width:32px;height:31px;box-sizing:border-box;border:2px solid #6b717b;border-radius:4px;background:#fff"></div>
<svg style="left:696px;top:1699.5px;" width="200" height="143" viewBox="0 0 200 143"><rect x="1" y="1" width="198" height="141" fill="#fff" stroke="#dcdce0" stroke-width="2.4"/><rect x="3.5" y="3.5" width="193" height="136" fill="none" stroke="#f1f1f2" stroke-width="2"/><rect x="8" y="5" width="184" height="133" fill="none" stroke="#ececec" stroke-width="1.2"/><rect x="182.4" y="5" width="13.5" height="133" fill="#fff" stroke="#b8b8b8" stroke-width="1.1"/><line x1="183" y1="12.0" x2="195.0" y2="12.0" stroke="#c4c4c4" stroke-width="0.8"/><line x1="183" y1="21.0" x2="195.0" y2="21.0" stroke="#c4c4c4" stroke-width="0.8"/><line x1="183" y1="30.0" x2="195.0" y2="30.0" stroke="#c4c4c4" stroke-width="0.8"/><line x1="183" y1="39.0" x2="195.0" y2="39.0" stroke="#c4c4c4" stroke-width="0.8"/><line x1="183" y1="48.0" x2="195.0" y2="48.0" stroke="#c4c4c4" stroke-width="0.8"/><line x1="183" y1="57.0" x2="195.0" y2="57.0" stroke="#c4c4c4" stroke-width="0.8"/><line x1="183" y1="66.0" x2="195.0" y2="66.0" stroke="#c4c4c4" stroke-width="0.8"/><line x1="183" y1="75.0" x2="195.0" y2="75.0" stroke="#c4c4c4" stroke-width="0.8"/><line x1="183" y1="84.0" x2="195.0" y2="84.0" stroke="#c4c4c4" stroke-width="0.8"/><line x1="183" y1="93.0" x2="195.0" y2="93.0" stroke="#c4c4c4" stroke-width="0.8"/><line x1="183" y1="102.0" x2="195.0" y2="102.0" stroke="#c4c4c4" stroke-width="0.8"/><line x1="183" y1="111.0" x2="195.0" y2="111.0" stroke="#c4c4c4" stroke-width="0.8"/><line x1="183" y1="120.0" x2="195.0" y2="120.0" stroke="#c4c4c4" stroke-width="0.8"/><line x1="183" y1="129.0" x2="195.0" y2="129.0" stroke="#c4c4c4" stroke-width="0.8"/><line x1="170.7" y1="5" x2="170.7" y2="138" stroke="#e0e0e0" stroke-width="1.2"/><rect x="77.5" y="29.4" width="76.3" height="100" rx="16" fill="#8a8a8a"/><rect x="84" y="36" width="63" height="90" rx="12" fill="#5f5f5f"/><rect x="95.8" y="46.7" width="39.2" height="60.3" rx="5" fill="#fff"/><line x1="98" y1="77" x2="133" y2="77" stroke="#ddd" stroke-width="0.6"/><circle cx="115.4" cy="77" r="4" fill="none" stroke="#ddd" stroke-width="0.6"/><path d="M88,33 L145,33" stroke="#aaa" stroke-width="1.2" stroke-dasharray="1.5,3"/><path d="M73,45 L73,115 M158,45 L158,115" stroke="#bbb" stroke-width="1.2" stroke-dasharray="1.5,4"/></svg>
<svg style="left:2433px;top:1744px;" width="52" height="52" viewBox="0 0 52 52"><circle cx="26" cy="26" r="26" fill="#658887"/><g fill="#fff"><path d="M26.9,11.9 L40,11.9 L40,17.6 L29.2,28.4 L23.7,22.6 L31,15.3 L27.7,15.3 L20.4,22.7 L18.4,20.7 Z"/><path d="M22.6,23.5 L28.2,29.2 L20.6,36.3 L15.6,31 Z"/><path d="M14.6,31.8 L19.6,37.1 L11.9,39.8 Z"/></g></svg><svg style="left:2501px;top:1742.5px;" width="95" height="55" viewBox="0 0 95 55"><rect width="95" height="55" rx="27.5" fill="#868b94"/><path d="M33.7,11.7 L48.3,11.7 L48.3,26.2 L29.3,44.7 L15.1,30.8 Z" fill="none" stroke="#fff" stroke-width="2.4" stroke-linejoin="miter"/><circle cx="39.9" cy="20.4" r="2.6" fill="none" stroke="#fff" stroke-width="2"/></svg><svg style="left:2638px;top:1749.5px;" width="12" height="44" viewBox="0 0 12 44"><circle cx="6" cy="6.3" r="3.6" fill="#868b94"/><circle cx="6" cy="21.8" r="3.6" fill="#868b94"/><circle cx="6" cy="37.3" r="3.6" fill="#868b94"/></svg>
<div class="a" style="left:2700px;top:339px;width:34px;height:1473px;background:#f1f1f1"></div>
<div class="a" style="left:2702px;top:373px;width:30px;height:329px;background:#c1c1c1"></div>
<svg style="left:2708px;top:350px;" width="18" height="12" viewBox="0 0 18 12"><path d="M1,11 L9,2 L17,11 Z" fill="#a3a3a3"/></svg>
<svg style="left:2708px;top:1789px;" width="18" height="12" viewBox="0 0 18 12"><path d="M1,1 L9,10 L17,1 Z" fill="#505050"/></svg>
<div class="t" style="left:102.00px;top:324.50px;font-size:25px;line-height:25px;font-weight:normal;color:#8a8f98;letter-spacing:1.161px;-webkit-text-stroke:0.7px #8a8f98">Activity</div>
<div class="t" style="left:100.00px;top:427.50px;font-size:25px;line-height:25px;font-weight:normal;color:#d4d5d9;letter-spacing:0.957px;-webkit-text-stroke:0.7px #d4d5d9">Drawings</div>
<div class="t" style="left:466.70px;top:427.50px;font-size:25px;line-height:25px;font-weight:normal;color:#d4d5d9;letter-spacing:0.000px;-webkit-text-stroke:0.7px #d4d5d9">58</div>
<div class="t" style="left:100.00px;top:530.50px;font-size:25px;line-height:25px;font-weight:normal;color:#8a8f98;letter-spacing:1.070px;-webkit-text-stroke:0.7px #8a8f98">Documents</div>
<div class="t" style="left:480.60px;top:530.50px;font-size:25px;line-height:25px;font-weight:normal;color:#8a8f98;letter-spacing:0.000px;-webkit-text-stroke:0.7px #8a8f98">3</div>
<div class="t" style="left:100.00px;top:633.50px;font-size:25px;line-height:25px;font-weight:normal;color:#8a8f98;letter-spacing:-0.151px;-webkit-text-stroke:0.7px #8a8f98">Issues</div>
<div class="t" style="left:466.70px;top:633.50px;font-size:25px;line-height:25px;font-weight:normal;color:#8a8f98;letter-spacing:0.000px;-webkit-text-stroke:0.7px #8a8f98">32</div>
<div class="t" style="left:102.00px;top:736.50px;font-size:25px;line-height:25px;font-weight:normal;color:#8a8f98;letter-spacing:0.131px;-webkit-text-stroke:0.7px #8a8f98">Team</div>
<div class="t" style="left:468.55px;top:736.50px;font-size:25px;line-height:25px;font-weight:normal;color:#8a8f98;letter-spacing:0.000px;-webkit-text-stroke:0.7px #8a8f98">11</div>
<div class="t" style="left:129.00px;top:1787.00px;font-size:25px;line-height:25px;font-weight:normal;color:#6f7580;letter-spacing:1.299px;-webkit-text-stroke:0.7px #6f7580">Matt Richmond</div>
<div class="t" style="left:600.00px;top:49.00px;font-size:49px;line-height:49px;font-weight:normal;color:#22262d;letter-spacing:-2.851px">24</div>
<div class="t" style="left:749.00px;top:45.00px;font-size:32px;line-height:32px;font-weight:normal;color:#ffffff;letter-spacing:-0.660px;-webkit-text-stroke:1.0px #ffffff">Successfully triggered export to Procore. Please check your Procore Document storage shortly.</div>
<div class="t" style="left:2424.00px;top:57.50px;font-size:26px;line-height:26px;font-weight:normal;color:#ffffff;letter-spacing:0.452px;-webkit-text-stroke:1.0px #ffffff">Upload drawings</div>
<div class="t" style="left:697.60px;top:277.60px;font-size:27px;line-height:27px;font-weight:normal;color:#a3a6ac;letter-spacing:-0.957px">Search drawings</div>
<div class="t" style="left:1348.00px;top:277.60px;font-size:27px;line-height:27px;font-weight:normal;color:#666c76;letter-spacing:-0.501px">Filter</div>
<div class="t" style="left:1852.00px;top:277.60px;font-size:27px;line-height:27px;font-weight:normal;color:#666c76;letter-spacing:-0.429px">Order by:</div>
<div class="t" style="left:1974.60px;top:277.60px;font-size:27px;line-height:27px;font-weight:normal;color:#666c76;letter-spacing:-0.328px">Name (A - Z)</div>
<div class="t" style="left:2509.20px;top:279.00px;font-size:25px;line-height:25px;font-weight:normal;color:#22262d;letter-spacing:-0.044px;-webkit-text-stroke:0.45px #22262d">1-30</div>
<div class="t" style="left:2575.20px;top:279.00px;font-size:25px;line-height:25px;font-weight:normal;color:#22262d;letter-spacing:2.896px">of</div>
<div class="t" style="left:2614.70px;top:279.00px;font-size:25px;line-height:25px;font-weight:normal;color:#22262d;letter-spacing:0.896px;-webkit-text-stroke:0.45px #22262d">58</div>
<div class="t" style="left:695.50px;top:371.50px;font-size:23px;line-height:23px;font-weight:normal;color:#22262d;letter-spacing:-0.413px;-webkit-text-stroke:0.45px #22262d">Select all</div>
<div class="t" style="left:944.00px;top:371.50px;font-size:23px;line-height:23px;font-weight:normal;color:#22262d;letter-spacing:-0.045px;-webkit-text-stroke:0.45px #22262d">Drawing</div>
<div class="t" style="left:1290.50px;top:371.50px;font-size:23px;line-height:23px;font-weight:normal;color:#22262d;letter-spacing:-0.215px;-webkit-text-stroke:0.45px #22262d">Uploaded by</div>
<div class="t" style="left:1711.00px;top:371.50px;font-size:23px;line-height:23px;font-weight:normal;color:#22262d;letter-spacing:-0.204px;-webkit-text-stroke:0.45px #22262d">Discipline</div>
<div class="t" style="left:2025.50px;top:371.50px;font-size:23px;line-height:23px;font-weight:normal;color:#22262d;letter-spacing:-0.702px;-webkit-text-stroke:0.45px #22262d">Revision</div>
<div class="t" style="left:944.80px;top:498.00px;font-size:24px;line-height:24px;font-weight:normal;color:#22262d;letter-spacing:-0.143px;-webkit-text-stroke:0.45px #22262d">A0.01</div>
<div class="t" style="left:943.80px;top:537.00px;font-size:24px;line-height:24px;font-weight:normal;color:#22262d;letter-spacing:-0.784px">RENDERED VIEWS</div>
<div class="t" style="left:1290.90px;top:498.00px;font-size:24px;line-height:24px;font-weight:normal;color:#22262d;letter-spacing:1.125px">Matt Richmond (you)</div>
<div class="t" style="left:1291.90px;top:537.00px;font-size:24px;line-height:24px;font-weight:normal;color:#22262d;letter-spacing:0.265px;-webkit-text-stroke:0.45px #22262d">Apr 10, 2019</div>
<div class="t" style="left:2025.60px;top:516.00px;font-size:24px;line-height:24px;font-weight:normal;color:#22262d;letter-spacing:0.000px">0</div>
<div class="t" style="left:2389.20px;top:517.20px;font-size:23px;line-height:23px;font-weight:normal;color:#ffffff;letter-spacing:0.000px">1</div>
<div class="t" style="left:2567.20px;top:516.10px;font-size:25.5px;line-height:25.5px;font-weight:normal;color:#ffffff;letter-spacing:0.000px">1</div>
<div class="t" style="left:944.80px;top:704.00px;font-size:24px;line-height:24px;font-weight:normal;color:#22262d;letter-spacing:0.857px;-webkit-text-stroke:0.45px #22262d">A0.02</div>
<div class="t" style="left:943.80px;top:743.00px;font-size:24px;line-height:24px;font-weight:normal;color:#22262d;letter-spacing:-0.784px">RENDERED VIEWS</div>
<div class="t" style="left:1290.90px;top:704.00px;font-size:24px;line-height:24px;font-weight:normal;color:#22262d;letter-spacing:1.125px">Matt Richmond (you)</div>
<div class="t" style="left:1291.90px;top:743.00px;font-size:24px;line-height:24px;font-weight:normal;color:#22262d;letter-spacing:0.265px;-webkit-text-stroke:0.45px #22262d">Apr 10, 2019</div>
<div class="t" style="left:2025.60px;top:722.00px;font-size:24px;line-height:24px;font-weight:normal;color:#22262d;letter-spacing:0.000px">0</div>
<div class="t" style="left:2389.20px;top:723.20px;font-size:23px;line-height:23px;font-weight:normal;color:#ffffff;letter-spacing:0.000px">1</div>
<div class="t" style="left:2566.50px;top:722.10px;font-size:25.5px;line-height:25.5px;font-weight:normal;color:#ffffff;letter-spacing:0.000px">2</div>
<div class="t" style="left:944.80px;top:910.00px;font-size:24px;line-height:24px;font-weight:normal;color:#22262d;letter-spacing:-0.034px;-webkit-text-stroke:0.45px #22262d">A001</div>
<div class="t" style="left:944.80px;top:949.00px;font-size:24px;line-height:24px;font-weight:normal;color:#22262d;letter-spacing:0.503px">Title Sheet</div>
<div class="t" style="left:1290.90px;top:910.00px;font-size:24px;line-height:24px;font-weight:normal;color:#22262d;letter-spacing:1.125px">Matt Richmond (you)</div>
<div class="t" style="left:1291.90px;top:949.00px;font-size:24px;line-height:24px;font-weight:normal;color:#22262d;letter-spacing:0.640px;-webkit-text-stroke:0.45px #22262d">Aug 8, 2019</div>
<div class="t" style="left:2024.60px;top:928.00px;font-size:24px;line-height:24px;font-weight:normal;color:#22262d;letter-spacing:0.000px">1</div>
<div class="t" style="left:2567.20px;top:928.10px;font-size:25.5px;line-height:25.5px;font-weight:normal;color:#ffffff;letter-spacing:0.000px">1</div>
<div class="t" style="left:944.80px;top:1116.00px;font-size:24px;line-height:24px;font-weight:normal;color:#22262d;letter-spacing:0.284px;-webkit-text-stroke:0.45px #22262d">A0-1</div>
<div class="t" style="left:943.80px;top:1155.00px;font-size:24px;line-height:24px;font-weight:normal;color:#22262d;letter-spacing:-0.242px">MATERIAL</div>
<div class="t" style="left:1290.90px;top:1116.00px;font-size:24px;line-height:24px;font-weight:normal;color:#22262d;letter-spacing:1.125px">Matt Richmond (you)</div>
<div class="t" style="left:1291.90px;top:1155.00px;font-size:24px;line-height:24px;font-weight:normal;color:#22262d;letter-spacing:0.265px;-webkit-text-stroke:0.45px #22262d">Apr 10, 2019</div>
<div class="t" style="left:2025.60px;top:1134.00px;font-size:24px;line-height:24px;font-weight:normal;color:#22262d;letter-spacing:0.000px">0</div>
<div class="t" style="left:2389.20px;top:1135.20px;font-size:23px;line-height:23px;font-weight:normal;color:#ffffff;letter-spacing:0.000px">1</div>
<div class="t" style="left:2567.50px;top:1134.10px;font-size:25.5px;line-height:25.5px;font-weight:normal;color:#ffffff;letter-spacing:0.000px">3</div>
<div class="t" style="left:944.80px;top:1302.50px;font-size:24px;line-height:24px;font-weight:normal;color:#22262d;letter-spacing:0.394px;-webkit-text-stroke:0.45px #22262d">A0-10-1</div>
<div class="t" style="left:944.80px;top:1341.50px;font-size:24px;line-height:24px;font-weight:normal;color:#22262d;letter-spacing:-0.809px">ARCHITECTURAL</div>
<div class="t" style="left:943.80px;top:1380.50px;font-size:24px;line-height:24px;font-weight:normal;color:#22262d;letter-spacing:0.048px">MATERIALS PLAN -</div>
<div class="t" style="left:1290.90px;top:1322.00px;font-size:24px;line-height:24px;font-weight:normal;color:#22262d;letter-spacing:1.125px">Matt Richmond (you)</div>
<div class="t" style="left:1291.90px;top:1361.00px;font-size:24px;line-height:24px;font-weight:normal;color:#22262d;letter-spacing:0.265px;-webkit-text-stroke:0.45px #22262d">Apr 10, 2019</div>
<div class="t" style="left:2025.60px;top:1340.00px;font-size:24px;line-height:24px;font-weight:normal;color:#22262d;letter-spacing:0.000px">0</div>
<div class="t" style="left:2567.50px;top:1340.10px;font-size:25.5px;line-height:25.5px;font-weight:normal;color:#ffffff;letter-spacing:0.000px">3</div>
<div class="t" style="left:944.80px;top:1528.00px;font-size:24px;line-height:24px;font-weight:normal;color:#22262d;letter-spacing:0.944px;-webkit-text-stroke:0.45px #22262d">A0-10-2</div>
<div class="t" style="left:944.80px;top:1567.00px;font-size:24px;line-height:24px;font-weight:normal;color:#22262d;letter-spacing:-0.809px">ARCHITECTURAL</div>
<div class="t" style="left:1290.90px;top:1528.00px;font-size:24px;line-height:24px;font-weight:normal;color:#22262d;letter-spacing:1.125px">Matt Richmond (you)</div>
<div class="t" style="left:1291.90px;top:1567.00px;font-size:24px;line-height:24px;font-weight:normal;color:#22262d;letter-spacing:0.265px;-webkit-text-stroke:0.45px #22262d">Apr 10, 2019</div>
<div class="t" style="left:2025.60px;top:1546.00px;font-size:24px;line-height:24px;font-weight:normal;color:#22262d;letter-spacing:0.000px">0</div>
<div class="t" style="left:2567.50px;top:1546.10px;font-size:25.5px;line-height:25.5px;font-weight:normal;color:#ffffff;letter-spacing:0.000px">3</div>
<div class="t" style="left:944.80px;top:1702.00px;font-size:24px;line-height:24px;font-weight:normal;color:#22262d;letter-spacing:0.071px;-webkit-text-stroke:0.45px #22262d">A0-11</div>
<div class="t" style="left:944.80px;top:1741.00px;font-size:24px;line-height:24px;font-weight:normal;color:#22262d;letter-spacing:-0.809px">ARCHITECTURAL</div>
<div class="t" style="left:943.80px;top:1780.00px;font-size:24px;line-height:24px;font-weight:normal;color:#22262d;letter-spacing:0.048px">MATERIALS PLAN -</div>
<div class="t" style="left:943.80px;top:1819.00px;font-size:24px;line-height:24px;font-weight:normal;color:#22262d;letter-spacing:0.499px">REFERENCE</div>
<div class="t" style="left:1290.90px;top:1741.00px;font-size:24px;line-height:24px;font-weight:normal;color:#22262d;letter-spacing:1.125px">Matt Richmond (you)</div>
<div class="t" style="left:1291.90px;top:1780.00px;font-size:24px;line-height:24px;font-weight:normal;color:#22262d;letter-spacing:0.265px;-webkit-text-stroke:0.45px #22262d">Apr 10, 2019</div>
<div class="t" style="left:2025.60px;top:1759.00px;font-size:24px;line-height:24px;font-weight:normal;color:#22262d;letter-spacing:0.000px">0</div>
<div class="t" style="left:2566.50px;top:1759.10px;font-size:25.5px;line-height:25.5px;font-weight:normal;color:#ffffff;letter-spacing:0.000px">2</div>
<div class="a" style="left:546px;top:1812px;width:2245px;height:63px;background:#f0f0f5"></div>
</body></html>
